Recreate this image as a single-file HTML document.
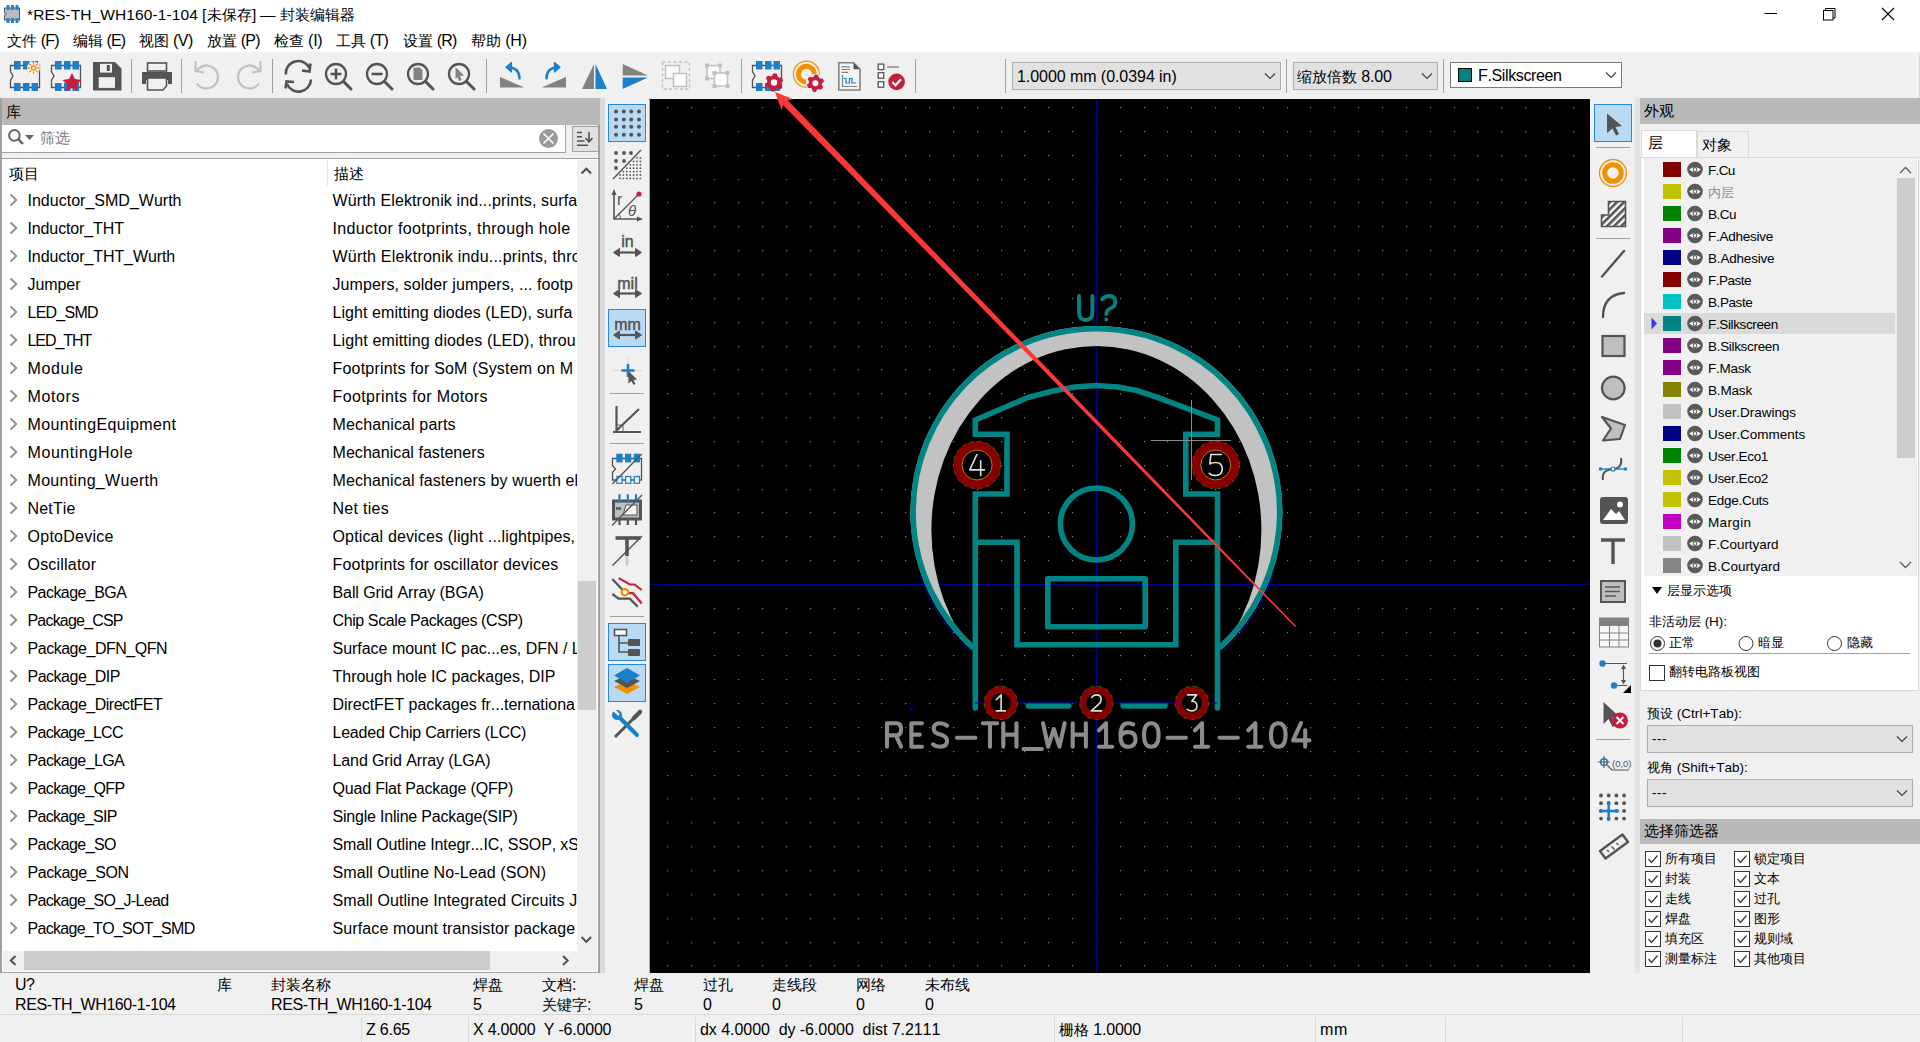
<!DOCTYPE html>
<html><head><meta charset="utf-8">
<style>
*{margin:0;padding:0;box-sizing:border-box}
html,body{width:1920px;height:1042px;overflow:hidden;background:#f0f0f0;font-family:"Liberation Sans",sans-serif;font-size:15px;color:#000;position:relative}
.a{position:absolute}
.t{position:absolute;white-space:nowrap;line-height:1;font-kerning:none}
svg{overflow:visible}
</style></head><body>

<div class="a" style="left:0px;top:0px;width:1920px;height:52px;background:#fff"></div>
<svg class="a" style="left:3px;top:5px" width="18" height="18" viewBox="0 0 18 18"><rect x="1.5" y="3" width="15" height="12" fill="#b4bcc6" stroke="#555" stroke-width="1"/><path d="M1.5 7 l2 2 l-2 2" fill="#fff" stroke="#555" stroke-width="1"/><rect x="3.5" y="0" width="3" height="5" fill="#1d84cf"/><rect x="3.5" y="13" width="3" height="5" fill="#1d84cf"/><rect x="8" y="0" width="3" height="5" fill="#1d84cf"/><rect x="8" y="13" width="3" height="5" fill="#1d84cf"/><rect x="12.5" y="0" width="3" height="5" fill="#1d84cf"/><rect x="12.5" y="13" width="3" height="5" fill="#1d84cf"/></svg>
<div class="t" style="left:27px;top:7px;font-size:15.5px;color:#000;"><span style="font-size:15.5px;letter-spacing:0.114px">*RES-TH_WH160-1-104</span></div>
<div class="t" style="left:202px;top:7px;font-size:15.5px;color:#000;"><span style="font-size:15.5px;letter-spacing:0.694px">[</span></div>
<div class="t" style="left:207px;top:7px;font-size:16px;color:#000;"><span style="font-size:15px">未保存</span></div>
<div class="t" style="left:252px;top:7px;font-size:15.5px;color:#000;"><span style="font-size:15.5px;letter-spacing:0.694px">]</span></div>
<div class="t" style="left:260px;top:7px;font-size:15.5px;color:#000;"><span style="font-size:15.5px;letter-spacing:0.500px">—</span></div>
<div class="t" style="left:279.5px;top:7px;font-size:16px;color:#000;"><span style="font-size:15px">封装编辑器</span></div>
<svg class="a" style="left:1764px;top:8px" width="14" height="12" viewBox="0 0 14 12"><line x1="0.5" y1="5.5" x2="13" y2="5.5" stroke="#000" stroke-width="1"/></svg>
<svg class="a" style="left:1822px;top:7px" width="14" height="14" viewBox="0 0 14 14"><rect x="1.5" y="3.5" width="9.5" height="9.5" fill="none" stroke="#000" stroke-width="1"/><path d="M3.5 3.5 V1.5 H13 V11 H11" fill="none" stroke="#000" stroke-width="1"/></svg>
<svg class="a" style="left:1881px;top:7px" width="14" height="14" viewBox="0 0 14 14"><path d="M1 1 L13 13 M13 1 L1 13" stroke="#000" stroke-width="1.1"/></svg>
<div class="t" style="left:7px;top:33px;font-size:16px;color:#000;"><span style="font-size:15px">文件</span><span style="font-size:16px;letter-spacing:-0.793px">&nbsp;(F)</span></div>
<div class="t" style="left:73px;top:33px;font-size:16px;color:#000;"><span style="font-size:15px">编辑</span><span style="font-size:16px;letter-spacing:-0.930px">&nbsp;(E)</span></div>
<div class="t" style="left:139px;top:33px;font-size:16px;color:#000;"><span style="font-size:15px">视图</span><span style="font-size:16px;letter-spacing:-0.473px">&nbsp;(V)</span></div>
<div class="t" style="left:207px;top:33px;font-size:16px;color:#000;"><span style="font-size:15px">放置</span><span style="font-size:16px;letter-spacing:-0.703px">&nbsp;(P)</span></div>
<div class="t" style="left:274px;top:33px;font-size:16px;color:#000;"><span style="font-size:15px">检查</span><span style="font-size:16px;letter-spacing:-0.323px">&nbsp;(I)</span></div>
<div class="t" style="left:336px;top:33px;font-size:16px;color:#000;"><span style="font-size:15px">工具</span><span style="font-size:16px;letter-spacing:-0.662px">&nbsp;(T)</span></div>
<div class="t" style="left:403px;top:33px;font-size:16px;color:#000;"><span style="font-size:15px">设置</span><span style="font-size:16px;letter-spacing:-0.781px">&nbsp;(R)</span></div>
<div class="t" style="left:471px;top:33px;font-size:16px;color:#000;"><span style="font-size:15px">帮助</span><span style="font-size:16px;letter-spacing:-0.205px">&nbsp;(H)</span></div>
<div class="a" style="left:0px;top:52px;width:1920px;height:46px;background:#f0f0f0"></div>
<div class="a" style="left:1919px;top:54px;width:1px;height:44px;background:#d9d9d9"></div>
<div class="a" style="left:131px;top:59px;width:1px;height:34px;background:#a0a0a0"></div>
<div class="a" style="left:181px;top:59px;width:1px;height:34px;background:#a0a0a0"></div>
<div class="a" style="left:272px;top:59px;width:1px;height:34px;background:#a0a0a0"></div>
<div class="a" style="left:486px;top:59px;width:1px;height:34px;background:#a0a0a0"></div>
<div class="a" style="left:741px;top:59px;width:1px;height:34px;background:#a0a0a0"></div>
<div class="a" style="left:915px;top:59px;width:1px;height:34px;background:#a0a0a0"></div>
<div class="a" style="left:1005px;top:59px;width:1px;height:34px;background:#a0a0a0"></div>
<div class="a" style="left:1286px;top:59px;width:1px;height:34px;background:#a0a0a0"></div>
<div class="a" style="left:1443px;top:59px;width:1px;height:34px;background:#a0a0a0"></div>
<svg class="a" style="left:0;top:0" width="1920" height="100"><path d="M10.5,65.5 H39.5 V87.5 H10.5 V80.1 L13,75.9 L10.5,71.6 Z" fill="none" stroke="#545454" stroke-width="1.3"/><rect x="14" y="61" width="6.5" height="8.5" fill="#1b7fc9"/><rect x="14" y="83" width="6.5" height="8" fill="#1b7fc9"/><rect x="23" y="61" width="6.5" height="8.5" fill="#1b7fc9"/><rect x="23" y="83" width="6.5" height="8" fill="#1b7fc9"/><rect x="31.5" y="61" width="6.5" height="8.5" fill="#1b7fc9"/><rect x="31.5" y="83" width="6.5" height="8" fill="#1b7fc9"/><circle cx="33.5" cy="68" r="6.5" fill="#fff" opacity="0.9"/><path d="M36.70,68.00 L39.50,68.00M35.76,70.26 L37.74,72.24M33.50,71.20 L33.50,74.00M31.24,70.26 L29.26,72.24M30.30,68.00 L27.50,68.00M31.24,65.74 L29.26,63.76M33.50,64.80 L33.50,62.00M35.76,65.74 L37.74,63.76" stroke="#f29100" stroke-width="1.3"/><circle cx="33.5" cy="68" r="2" fill="none" stroke="#f29100" stroke-width="1.3"/><path d="M51.5,65.5 H80.5 V87.5 H51.5 V80.1 L54,75.9 L51.5,71.6 Z" fill="none" stroke="#545454" stroke-width="1.3"/><rect x="55" y="61" width="6.5" height="8.5" fill="#1b7fc9"/><rect x="55" y="83" width="6.5" height="8" fill="#1b7fc9"/><rect x="64" y="61" width="6.5" height="8.5" fill="#1b7fc9"/><rect x="64" y="83" width="6.5" height="8" fill="#1b7fc9"/><rect x="72.5" y="61" width="6.5" height="8.5" fill="#1b7fc9"/><rect x="72.5" y="83" width="6.5" height="8" fill="#1b7fc9"/><path d="M72.00,73.00 L74.94,78.95 L81.51,79.91 L76.76,84.55 L77.88,91.09 L72.00,88.00 L66.12,91.09 L67.24,84.55 L62.49,79.91 L69.06,78.95Z" fill="#c51f3b"/><path d="M93,62 H115 L121.5,68.5 V90.5 H93 Z" fill="#545454"/><rect x="100" y="63.8" width="12" height="8.8" fill="#f0f0f0"/><rect x="106.8" y="65" width="3" height="6" fill="#545454"/><rect x="98.7" y="77.2" width="16.3" height="10.7" fill="#f0f0f0"/><rect x="147.5" y="63" width="19" height="8" fill="none" stroke="#545454" stroke-width="1.6"/><path d="M142,72 H172 V84 H168 V80 H146 V84 H142 Z" fill="#545454"/><path d="M147.5,78 H166.5 V86 L163,90 H147.5 Z" fill="#f0f0f0" stroke="#545454" stroke-width="1.6"/><path d="M195.5,61 V71 L204,72.5" fill="none" stroke="#c0c0c0" stroke-width="2.2"/><path d="M197,70.5 A11.5,11.5 0 1 1 197,83.5" fill="none" stroke="#c0c0c0" stroke-width="2.2"/><path d="M260.5,61 V71 L252,72.5" fill="none" stroke="#c0c0c0" stroke-width="2.2"/><path d="M259,70.5 A11.5,11.5 0 1 0 259,83.5" fill="none" stroke="#c0c0c0" stroke-width="2.2"/><path d="M285.8,74.5 A12.5,12.5 0 0 1 309.5,68" fill="none" stroke="#545454" stroke-width="2.6"/><path d="M310.5,63.5 L309.5,71.5 L302,70.5" fill="none" stroke="#545454" stroke-width="2.6" stroke-linejoin="miter"/><path d="M311,79.5 A12.5,12.5 0 0 1 287,84" fill="none" stroke="#545454" stroke-width="2.6"/><path d="M285.5,88.5 L286.5,81.5 L294,82" fill="none" stroke="#545454" stroke-width="2.6" stroke-linejoin="miter"/><circle cx="336" cy="74" r="10" fill="none" stroke="#545454" stroke-width="2.3"/><path d="M343.5,81.5 L351,89" stroke="#545454" stroke-width="3" stroke-linecap="round"/><path d="M330.5,74 H341.5 M336,68.5 V79.5" stroke="#545454" stroke-width="2.6"/><circle cx="377" cy="74" r="10" fill="none" stroke="#545454" stroke-width="2.3"/><path d="M384.5,81.5 L392,89" stroke="#545454" stroke-width="3" stroke-linecap="round"/><path d="M371.5,74 H382.5" stroke="#545454" stroke-width="2.6"/><circle cx="418" cy="74" r="10" fill="none" stroke="#545454" stroke-width="2.3"/><path d="M425.5,81.5 L433,89" stroke="#545454" stroke-width="3" stroke-linecap="round"/><path d="M413.5,67.5 H420 L422.5,70 V80 H413.5 Z" fill="#828282"/><circle cx="459" cy="74" r="10" fill="none" stroke="#545454" stroke-width="2.3"/><path d="M466.5,81.5 L474,89" stroke="#545454" stroke-width="3" stroke-linecap="round"/><path d="M455.5,67 L464,75.5 L460,76 L461.5,80 L459,81 L457.5,77 L455.5,79 Z" fill="#828282"/><path d="M500,77 L524.5,87.6 H500 Z" fill="#828282"/><path d="M519.5,78.5 Q519.5,68 509,67.5" fill="none" stroke="#1b7fc9" stroke-width="2.4" stroke-linecap="round"/><path d="M506,67.2 L511.5,62.5 L511.5,72 Z" fill="#1b7fc9" stroke="#1b7fc9" stroke-width="1.2" stroke-linejoin="round"/><path d="M566,77 L541.5,87.6 H566 Z" fill="#828282"/><path d="M546.5,78.5 Q546.5,68 557,67.5" fill="none" stroke="#1b7fc9" stroke-width="2.4" stroke-linecap="round"/><path d="M560,67.2 L554.5,62.5 L554.5,72 Z" fill="#1b7fc9" stroke="#1b7fc9" stroke-width="1.2" stroke-linejoin="round"/><path d="M582,89 L594,64 V89 Z" fill="#828282"/><path d="M595.5,64 L607,89 H595.5 Z" fill="#1b7fc9"/><path d="M622.7,64 L648,75.6 H622.7 Z" fill="#828282"/><path d="M622.7,77.6 H648 L622.7,89 Z" fill="#1b7fc9"/><rect x="662.5" y="62" width="27" height="27" fill="none" stroke="#c0c0c0" stroke-width="1.5" stroke-dasharray="3 2.5"/><rect x="665.5" y="65.5" width="14" height="13" fill="#fafafa" stroke="#c0c0c0" stroke-width="1.5"/><rect x="673.5" y="73.5" width="13" height="13" fill="#fff" stroke="#c0c0c0" stroke-width="1.5"/><rect x="707" y="65.5" width="13" height="13" fill="#fafafa" stroke="#c0c0c0" stroke-width="1.5"/><rect x="714.5" y="73" width="13" height="13" fill="#fff" stroke="#c0c0c0" stroke-width="1.5"/><rect x="705" y="63.5" width="4" height="4" fill="#c0c0c0"/><rect x="718" y="63.5" width="4" height="4" fill="#c0c0c0"/><rect x="705" y="76.5" width="4" height="4" fill="#c0c0c0"/><rect x="712.5" y="71" width="4" height="4" fill="#c0c0c0"/><rect x="725.5" y="71" width="4" height="4" fill="#c0c0c0"/><rect x="712.5" y="84" width="4" height="4" fill="#c0c0c0"/><rect x="725.5" y="84" width="4" height="4" fill="#c0c0c0"/><path d="M752.5,65.5 H781.5 V87.5 H752.5 V80.1 L755,75.9 L752.5,71.6 Z" fill="none" stroke="#545454" stroke-width="1.3"/><rect x="756" y="61" width="6.5" height="8.5" fill="#1b7fc9"/><rect x="756" y="83" width="6.5" height="8" fill="#1b7fc9"/><rect x="765" y="61" width="6.5" height="8.5" fill="#1b7fc9"/><rect x="765" y="83" width="6.5" height="8" fill="#1b7fc9"/><rect x="773.5" y="61" width="6.5" height="8.5" fill="#1b7fc9"/><rect x="773.5" y="83" width="6.5" height="8" fill="#1b7fc9"/><path d="M774.00,74.00 L776.20,74.29 L777.06,77.20 L778.33,78.17 L781.36,78.25 L782.21,80.30 L780.12,82.50 L779.91,84.08 L781.36,86.75 L780.01,88.51 L777.06,87.80 L775.58,88.41 L774.00,91.00 L771.80,90.71 L770.94,87.80 L769.67,86.83 L766.64,86.75 L765.79,84.70 L767.88,82.50 L768.09,80.92 L766.64,78.25 L767.99,76.49 L770.94,77.20 L772.42,76.59Z" fill="#c51f3b" stroke="#c51f3b" stroke-width="1.5" stroke-linejoin="round"/><circle cx="774" cy="82.5" r="3.2" fill="#fff"/><circle cx="806.4" cy="74.2" r="13" fill="none" stroke="#f29100" stroke-width="1.2"/><circle cx="806.4" cy="74.2" r="8" fill="none" stroke="#f29100" stroke-width="5"/><circle cx="815.4" cy="83.2" r="9.5" fill="#f0f0f0"/><path d="M815.40,75.20 L817.47,75.47 L818.28,78.21 L819.47,79.13 L822.33,79.20 L823.13,81.13 L821.16,83.20 L820.96,84.69 L822.33,87.20 L821.06,88.86 L818.28,88.19 L816.89,88.76 L815.40,91.20 L813.33,90.93 L812.52,88.19 L811.33,87.27 L808.47,87.20 L807.67,85.27 L809.64,83.20 L809.84,81.71 L808.47,79.20 L809.74,77.54 L812.52,78.21 L813.91,77.64Z" fill="#c51f3b" stroke="#c51f3b" stroke-width="1.5" stroke-linejoin="round"/><circle cx="815.4" cy="83.2" r="3" fill="#fff"/><path d="M838.8,62.8 H853.5 L860,69.3 V90 H838.8 Z" fill="#f4f4f4" stroke="#828282" stroke-width="1.6"/><path d="M853.5,62.8 L860,69.3 H853.5 Z" fill="#545454"/><path d="M841.5,66.8 H850 M841.5,69.5 H850 M841.5,72.3 H848" stroke="#828282" stroke-width="1.2"/><path d="M842.5,75 V86.5 H857" fill="none" stroke="#828282" stroke-width="1.2"/><path d="M843.5,78.5 H846 V83 H849.5 V78.5 H852 V83 H856" fill="none" stroke="#1b7fc9" stroke-width="1.2"/><rect x="878.2" y="64.10000000000001" width="5.5" height="5.5" fill="#fff" stroke="#545454" stroke-width="1.3"/><rect x="878.2" y="72.7" width="5.5" height="5.5" fill="#fff" stroke="#545454" stroke-width="1.3"/><rect x="878.2" y="81.7" width="5.5" height="5.5" fill="#fff" stroke="#545454" stroke-width="1.3"/><path d="M887,67 H899" stroke="#828282" stroke-width="1.4"/><circle cx="896.6" cy="81.9" r="8.3" fill="#c51f3b"/><path d="M892.3,82 L895.5,85.3 L901,79.2" fill="none" stroke="#fff" stroke-width="2.2"/></svg>
<div class="a" style="left:1012px;top:62px;width:269px;height:28px;background:#e1e1e1;border:1px solid #adadad"></div>
<div class="t" style="left:1017px;top:69px;font-size:16px;color:#000;"><span style="font-size:16px;letter-spacing:-0.061px">1.0000 mm (0.0394 in)</span></div>
<div class="a" style="left:1293px;top:62px;width:145px;height:28px;background:#e1e1e1;border:1px solid #adadad"></div>
<div class="t" style="left:1297px;top:69px;font-size:16px;color:#000;"><span style="font-size:15px">缩放倍数</span><span style="font-size:16px;letter-spacing:-0.184px">&nbsp;8.00</span></div>
<div class="a" style="left:1450px;top:62px;width:172px;height:26px;background:#fff;border:1px solid #7a7a7a"></div>
<div class="a" style="left:1458px;top:68px;width:14px;height:14px;background:#008484;border:1px solid #000"></div>
<div class="t" style="left:1478px;top:68px;font-size:16px;color:#000;"><span style="font-size:16px;letter-spacing:-0.375px">F.Silkscreen</span></div>
<svg class="a" style="left:0;top:0" width="1920" height="100"><path d="M1265,73.5 L1270,78.5 L1275,73.5" fill="none" stroke="#404040" stroke-width="1.2"/><path d="M1422,73.5 L1427,78.5 L1432,73.5" fill="none" stroke="#404040" stroke-width="1.2"/><path d="M1606,72.5 L1611,77.5 L1616,72.5" fill="none" stroke="#404040" stroke-width="1.2"/></svg>
<div class="a" style="left:0px;top:98px;width:600px;height:876px;background:#f0f0f0"></div>
<div class="a" style="left:600px;top:98px;width:5px;height:875px;background:#dadada"></div>
<div class="a" style="left:0px;top:98px;width:600px;height:27px;background:#b9b9b9"></div>
<div class="t" style="left:6px;top:104px;font-size:16px;color:#000;"><span style="font-size:15px">库</span></div>
<div class="a" style="left:2px;top:125px;width:564px;height:28px;background:#fff;border-right:1px solid #a0a0a8;border-bottom:1px solid #a0a0a8"></div>
<div class="t" style="left:40px;top:130px;font-size:16px;color:#7a7a7a;"><span style="font-size:15px">筛选</span></div>
<div class="a" style="left:572px;top:126px;width:27px;height:26px;background:#e1e1e1;border:1px solid #a0a0a0"></div>
<div class="a" style="left:2px;top:158px;width:597px;height:814px;background:#fff;border-top:1px solid #a0a0a8"></div>
<div class="a" style="left:0px;top:98px;width:2px;height:876px;background:#a0a0a0"></div>
<div class="a" style="left:598px;top:125px;width:2px;height:849px;background:#a0a0a0"></div>
<div class="a" style="left:0px;top:972px;width:600px;height:2px;background:#a0a0a0"></div>
<div class="t" style="left:9px;top:166px;font-size:16px;color:#000;"><span style="font-size:15px">项目</span></div>
<div class="t" style="left:334px;top:166px;font-size:16px;color:#000;"><span style="font-size:15px">描述</span></div>
<div class="a" style="left:327px;top:160px;width:1px;height:26px;background:#e5e5e5"></div>
<svg class="a" style="left:0;top:0" width="700" height="1000"><circle cx="14.4" cy="135.4" r="5.3" fill="none" stroke="#646464" stroke-width="2"/><path d="M18.2,139.2 L23,144" stroke="#646464" stroke-width="2.4"/><path d="M25,135 H34 L29.5,140 Z" fill="#646464"/><circle cx="548.5" cy="138.5" r="9.5" fill="#9a9a9a"/><path d="M543.5,133.5 L553.5,143.5 M553.5,133.5 L543.5,143.5" stroke="#fff" stroke-width="1.6"/><path d="M577,132.5 H582 M577,136.8 H582 M577,141 H584.5 M577,145.2 H588" stroke="#505050" stroke-width="1.6"/><path d="M589,132 V141" stroke="#505050" stroke-width="1.6"/><path d="M585.5,138 L589,141.8 L592.5,138" fill="none" stroke="#505050" stroke-width="1.6"/></svg>
<div class="a" style="left:2px;top:186px;width:575px;height:765px;overflow:hidden">
<div class="t" style="left:25.5px;top:7px;font-size:16px"><span style="font-size:16px;letter-spacing:0.011px">Inductor_SMD_Wurth</span></div>
<div class="t" style="left:330.5px;top:7px;font-size:16px"><span style="font-size:16px;letter-spacing:0.130px">Würth Elektronik ind...prints, surfa</span></div>
<div class="t" style="left:25.5px;top:35px;font-size:16px"><span style="font-size:16px;letter-spacing:-0.124px">Inductor_THT</span></div>
<div class="t" style="left:330.5px;top:35px;font-size:16px"><span style="font-size:16px;letter-spacing:0.364px">Inductor footprints, through hole</span></div>
<div class="t" style="left:25.5px;top:63px;font-size:16px"><span style="font-size:16px;letter-spacing:-0.100px">Inductor_THT_Wurth</span></div>
<div class="t" style="left:330.5px;top:63px;font-size:16px"><span style="font-size:16px;letter-spacing:0.203px">Würth Elektronik indu...prints, thro</span></div>
<div class="t" style="left:25.5px;top:91px;font-size:16px"><span style="font-size:16px;letter-spacing:-0.075px">Jumper</span></div>
<div class="t" style="left:330.5px;top:91px;font-size:16px"><span style="font-size:16px;letter-spacing:0.093px">Jumpers, solder jumpers, ... footp</span></div>
<div class="t" style="left:25.5px;top:119px;font-size:16px"><span style="font-size:16px;letter-spacing:-0.755px">LED_SMD</span></div>
<div class="t" style="left:330.5px;top:119px;font-size:16px"><span style="font-size:16px;letter-spacing:0.071px">Light emitting diodes (LED), surfa</span></div>
<div class="t" style="left:25.5px;top:147px;font-size:16px"><span style="font-size:16px;letter-spacing:-1.041px">LED_THT</span></div>
<div class="t" style="left:330.5px;top:147px;font-size:16px"><span style="font-size:16px;letter-spacing:0.148px">Light emitting diodes (LED), throu</span></div>
<div class="t" style="left:25.5px;top:175px;font-size:16px"><span style="font-size:16px;letter-spacing:0.590px">Module</span></div>
<div class="t" style="left:330.5px;top:175px;font-size:16px"><span style="font-size:16px;letter-spacing:0.195px">Footprints for SoM (System on M</span></div>
<div class="t" style="left:25.5px;top:203px;font-size:16px"><span style="font-size:16px;letter-spacing:0.612px">Motors</span></div>
<div class="t" style="left:330.5px;top:203px;font-size:16px"><span style="font-size:16px;letter-spacing:0.373px">Footprints for Motors</span></div>
<div class="t" style="left:25.5px;top:231px;font-size:16px"><span style="font-size:16px;letter-spacing:0.390px">MountingEquipment</span></div>
<div class="t" style="left:330.5px;top:231px;font-size:16px"><span style="font-size:16px;letter-spacing:0.134px">Mechanical parts</span></div>
<div class="t" style="left:25.5px;top:259px;font-size:16px"><span style="font-size:16px;letter-spacing:0.578px">MountingHole</span></div>
<div class="t" style="left:330.5px;top:259px;font-size:16px"><span style="font-size:16px;letter-spacing:0.050px">Mechanical fasteners</span></div>
<div class="t" style="left:25.5px;top:287px;font-size:16px"><span style="font-size:16px;letter-spacing:0.317px">Mounting_Wuerth</span></div>
<div class="t" style="left:330.5px;top:287px;font-size:16px"><span style="font-size:16px;letter-spacing:0.114px">Mechanical fasteners by wuerth el</span></div>
<div class="t" style="left:25.5px;top:315px;font-size:16px"><span style="font-size:16px;letter-spacing:0.159px">NetTie</span></div>
<div class="t" style="left:330.5px;top:315px;font-size:16px"><span style="font-size:16px;letter-spacing:0.284px">Net ties</span></div>
<div class="t" style="left:25.5px;top:343px;font-size:16px"><span style="font-size:16px;letter-spacing:0.268px">OptoDevice</span></div>
<div class="t" style="left:330.5px;top:343px;font-size:16px"><span style="font-size:16px;letter-spacing:0.142px">Optical devices (light ...lightpipes,</span></div>
<div class="t" style="left:25.5px;top:371px;font-size:16px"><span style="font-size:16px;letter-spacing:0.199px">Oscillator</span></div>
<div class="t" style="left:330.5px;top:371px;font-size:16px"><span style="font-size:16px;letter-spacing:0.162px">Footprints for oscillator devices</span></div>
<div class="t" style="left:25.5px;top:399px;font-size:16px"><span style="font-size:16px;letter-spacing:-0.565px">Package_BGA</span></div>
<div class="t" style="left:330.5px;top:399px;font-size:16px"><span style="font-size:16px;letter-spacing:-0.085px">Ball Grid Array (BGA)</span></div>
<div class="t" style="left:25.5px;top:427px;font-size:16px"><span style="font-size:16px;letter-spacing:-0.804px">Package_CSP</span></div>
<div class="t" style="left:330.5px;top:427px;font-size:16px"><span style="font-size:16px;letter-spacing:-0.398px">Chip Scale Packages (CSP)</span></div>
<div class="t" style="left:25.5px;top:455px;font-size:16px"><span style="font-size:16px;letter-spacing:-0.472px">Package_DFN_QFN</span></div>
<div class="t" style="left:330.5px;top:455px;font-size:16px"><span style="font-size:16px;letter-spacing:-0.025px">Surface mount IC pac...es, DFN / L</span></div>
<div class="t" style="left:25.5px;top:483px;font-size:16px"><span style="font-size:16px;letter-spacing:-0.491px">Package_DIP</span></div>
<div class="t" style="left:330.5px;top:483px;font-size:16px"><span style="font-size:16px;letter-spacing:-0.011px">Through hole IC packages, DIP</span></div>
<div class="t" style="left:25.5px;top:511px;font-size:16px"><span style="font-size:16px;letter-spacing:-0.490px">Package_DirectFET</span></div>
<div class="t" style="left:330.5px;top:511px;font-size:16px"><span style="font-size:16px;letter-spacing:-0.038px">DirectFET packages fr...ternationa</span></div>
<div class="t" style="left:25.5px;top:539px;font-size:16px"><span style="font-size:16px;letter-spacing:-0.720px">Package_LCC</span></div>
<div class="t" style="left:330.5px;top:539px;font-size:16px"><span style="font-size:16px;letter-spacing:-0.211px">Leaded Chip Carriers (LCC)</span></div>
<div class="t" style="left:25.5px;top:567px;font-size:16px"><span style="font-size:16px;letter-spacing:-0.591px">Package_LGA</span></div>
<div class="t" style="left:330.5px;top:567px;font-size:16px"><span style="font-size:16px;letter-spacing:-0.103px">Land Grid Array (LGA)</span></div>
<div class="t" style="left:25.5px;top:595px;font-size:16px"><span style="font-size:16px;letter-spacing:-0.643px">Package_QFP</span></div>
<div class="t" style="left:330.5px;top:595px;font-size:16px"><span style="font-size:16px;letter-spacing:-0.190px">Quad Flat Package (QFP)</span></div>
<div class="t" style="left:25.5px;top:623px;font-size:16px"><span style="font-size:16px;letter-spacing:-0.708px">Package_SIP</span></div>
<div class="t" style="left:330.5px;top:623px;font-size:16px"><span style="font-size:16px;letter-spacing:-0.201px">Single Inline Package(SIP)</span></div>
<div class="t" style="left:25.5px;top:651px;font-size:16px"><span style="font-size:16px;letter-spacing:-0.589px">Package_SO</span></div>
<div class="t" style="left:330.5px;top:651px;font-size:16px"><span style="font-size:16px;letter-spacing:-0.129px">Small Outline Integr...IC, SSOP, xSO</span></div>
<div class="t" style="left:25.5px;top:679px;font-size:16px"><span style="font-size:16px;letter-spacing:-0.420px">Package_SON</span></div>
<div class="t" style="left:330.5px;top:679px;font-size:16px"><span style="font-size:16px;letter-spacing:0.105px">Small Outline No-Lead (SON)</span></div>
<div class="t" style="left:25.5px;top:707px;font-size:16px"><span style="font-size:16px;letter-spacing:-0.660px">Package_SO_J-Lead</span></div>
<div class="t" style="left:330.5px;top:707px;font-size:16px"><span style="font-size:16px;letter-spacing:0.082px">Small Outline Integrated Circuits J</span></div>
<div class="t" style="left:25.5px;top:735px;font-size:16px"><span style="font-size:16px;letter-spacing:-0.699px">Package_TO_SOT_SMD</span></div>
<div class="t" style="left:330.5px;top:735px;font-size:16px"><span style="font-size:16px;letter-spacing:0.108px">Surface mount transistor package</span></div>
</div>
<svg class="a" style="left:0;top:0" width="700" height="1000"><path d="M10.5,194.5 L16.3,200 L10.5,205.5" fill="none" stroke="#8e8e8e" stroke-width="1.9"/><path d="M10.5,222.5 L16.3,228 L10.5,233.5" fill="none" stroke="#8e8e8e" stroke-width="1.9"/><path d="M10.5,250.5 L16.3,256 L10.5,261.5" fill="none" stroke="#8e8e8e" stroke-width="1.9"/><path d="M10.5,278.5 L16.3,284 L10.5,289.5" fill="none" stroke="#8e8e8e" stroke-width="1.9"/><path d="M10.5,306.5 L16.3,312 L10.5,317.5" fill="none" stroke="#8e8e8e" stroke-width="1.9"/><path d="M10.5,334.5 L16.3,340 L10.5,345.5" fill="none" stroke="#8e8e8e" stroke-width="1.9"/><path d="M10.5,362.5 L16.3,368 L10.5,373.5" fill="none" stroke="#8e8e8e" stroke-width="1.9"/><path d="M10.5,390.5 L16.3,396 L10.5,401.5" fill="none" stroke="#8e8e8e" stroke-width="1.9"/><path d="M10.5,418.5 L16.3,424 L10.5,429.5" fill="none" stroke="#8e8e8e" stroke-width="1.9"/><path d="M10.5,446.5 L16.3,452 L10.5,457.5" fill="none" stroke="#8e8e8e" stroke-width="1.9"/><path d="M10.5,474.5 L16.3,480 L10.5,485.5" fill="none" stroke="#8e8e8e" stroke-width="1.9"/><path d="M10.5,502.5 L16.3,508 L10.5,513.5" fill="none" stroke="#8e8e8e" stroke-width="1.9"/><path d="M10.5,530.5 L16.3,536 L10.5,541.5" fill="none" stroke="#8e8e8e" stroke-width="1.9"/><path d="M10.5,558.5 L16.3,564 L10.5,569.5" fill="none" stroke="#8e8e8e" stroke-width="1.9"/><path d="M10.5,586.5 L16.3,592 L10.5,597.5" fill="none" stroke="#8e8e8e" stroke-width="1.9"/><path d="M10.5,614.5 L16.3,620 L10.5,625.5" fill="none" stroke="#8e8e8e" stroke-width="1.9"/><path d="M10.5,642.5 L16.3,648 L10.5,653.5" fill="none" stroke="#8e8e8e" stroke-width="1.9"/><path d="M10.5,670.5 L16.3,676 L10.5,681.5" fill="none" stroke="#8e8e8e" stroke-width="1.9"/><path d="M10.5,698.5 L16.3,704 L10.5,709.5" fill="none" stroke="#8e8e8e" stroke-width="1.9"/><path d="M10.5,726.5 L16.3,732 L10.5,737.5" fill="none" stroke="#8e8e8e" stroke-width="1.9"/><path d="M10.5,754.5 L16.3,760 L10.5,765.5" fill="none" stroke="#8e8e8e" stroke-width="1.9"/><path d="M10.5,782.5 L16.3,788 L10.5,793.5" fill="none" stroke="#8e8e8e" stroke-width="1.9"/><path d="M10.5,810.5 L16.3,816 L10.5,821.5" fill="none" stroke="#8e8e8e" stroke-width="1.9"/><path d="M10.5,838.5 L16.3,844 L10.5,849.5" fill="none" stroke="#8e8e8e" stroke-width="1.9"/><path d="M10.5,866.5 L16.3,872 L10.5,877.5" fill="none" stroke="#8e8e8e" stroke-width="1.9"/><path d="M10.5,894.5 L16.3,900 L10.5,905.5" fill="none" stroke="#8e8e8e" stroke-width="1.9"/><path d="M10.5,922.5 L16.3,928 L10.5,933.5" fill="none" stroke="#8e8e8e" stroke-width="1.9"/></svg>
<div class="a" style="left:577px;top:160px;width:20px;height:811px;background:#f0f0f0"></div>
<div class="a" style="left:578px;top:581px;width:18px;height:129px;background:#cdcdcd"></div>
<div class="a" style="left:3px;top:951px;width:574px;height:20px;background:#f0f0f0"></div>
<div class="a" style="left:24px;top:951px;width:466px;height:19px;background:#cdcdcd"></div>
<svg class="a" style="left:0;top:0" width="700" height="1000"><path d="M581.5,173.5 L586.3,168.7 L591.1,173.5" fill="none" stroke="#505050" stroke-width="2"/><path d="M581.5,937 L586.3,941.8 L591.1,937" fill="none" stroke="#505050" stroke-width="2"/><path d="M15.5,956 L10.8,960.5 L15.5,965" fill="none" stroke="#505050" stroke-width="2"/><path d="M563,956 L567.7,960.5 L563,965" fill="none" stroke="#505050" stroke-width="2"/></svg>
<div class="a" style="left:605px;top:98px;width:45px;height:874px;background:#f0f0f0"></div>
<svg class="a" style="left:0;top:0" width="700" height="1000"><rect x="608.5" y="104.5" width="37" height="37" fill="#b8daf5" stroke="#2a86d8" stroke-width="1"/><rect x="608.5" y="309.5" width="37" height="37" fill="#b8daf5" stroke="#2a86d8" stroke-width="1"/><rect x="608.5" y="623.5" width="37" height="37" fill="#b8daf5" stroke="#2a86d8" stroke-width="1"/><rect x="608.5" y="664.5" width="37" height="37" fill="#b8daf5" stroke="#2a86d8" stroke-width="1"/><circle cx="616" cy="111.6" r="2" fill="#545454"/><circle cx="616" cy="119.6" r="2" fill="#545454"/><circle cx="616" cy="126.8" r="2" fill="#545454"/><circle cx="616" cy="134.8" r="2" fill="#545454"/><circle cx="623.8" cy="111.6" r="2" fill="#545454"/><circle cx="623.8" cy="119.6" r="2" fill="#545454"/><circle cx="623.8" cy="126.8" r="2" fill="#545454"/><circle cx="623.8" cy="134.8" r="2" fill="#545454"/><circle cx="631.2" cy="111.6" r="2" fill="#545454"/><circle cx="631.2" cy="119.6" r="2" fill="#545454"/><circle cx="631.2" cy="126.8" r="2" fill="#545454"/><circle cx="631.2" cy="134.8" r="2" fill="#545454"/><circle cx="639" cy="111.6" r="2" fill="#545454"/><circle cx="639" cy="119.6" r="2" fill="#545454"/><circle cx="639" cy="126.8" r="2" fill="#545454"/><circle cx="639" cy="134.8" r="2" fill="#545454"/><circle cx="616" cy="153" r="1.9" fill="#545454"/><circle cx="624" cy="153" r="1.9" fill="#545454"/><circle cx="631" cy="153" r="1.9" fill="#545454"/><circle cx="616" cy="161" r="1.9" fill="#545454"/><circle cx="624" cy="161" r="1.9" fill="#545454"/><circle cx="616" cy="168" r="1.9" fill="#545454"/><circle cx="620.0" cy="175.0" r="0.9" fill="#545454"/><circle cx="620.0" cy="178.4" r="0.9" fill="#545454"/><circle cx="623.4" cy="171.6" r="0.9" fill="#545454"/><circle cx="623.4" cy="175.0" r="0.9" fill="#545454"/><circle cx="623.4" cy="178.4" r="0.9" fill="#545454"/><circle cx="626.8" cy="168.2" r="0.9" fill="#545454"/><circle cx="626.8" cy="171.6" r="0.9" fill="#545454"/><circle cx="626.8" cy="175.0" r="0.9" fill="#545454"/><circle cx="626.8" cy="178.4" r="0.9" fill="#545454"/><circle cx="630.2" cy="164.8" r="0.9" fill="#545454"/><circle cx="630.2" cy="168.2" r="0.9" fill="#545454"/><circle cx="630.2" cy="171.6" r="0.9" fill="#545454"/><circle cx="630.2" cy="175.0" r="0.9" fill="#545454"/><circle cx="630.2" cy="178.4" r="0.9" fill="#545454"/><circle cx="633.6" cy="161.4" r="0.9" fill="#545454"/><circle cx="633.6" cy="164.8" r="0.9" fill="#545454"/><circle cx="633.6" cy="168.2" r="0.9" fill="#545454"/><circle cx="633.6" cy="171.6" r="0.9" fill="#545454"/><circle cx="633.6" cy="175.0" r="0.9" fill="#545454"/><circle cx="633.6" cy="178.4" r="0.9" fill="#545454"/><circle cx="637.0" cy="158.0" r="0.9" fill="#545454"/><circle cx="637.0" cy="161.4" r="0.9" fill="#545454"/><circle cx="637.0" cy="164.8" r="0.9" fill="#545454"/><circle cx="637.0" cy="168.2" r="0.9" fill="#545454"/><circle cx="637.0" cy="171.6" r="0.9" fill="#545454"/><circle cx="637.0" cy="175.0" r="0.9" fill="#545454"/><circle cx="637.0" cy="178.4" r="0.9" fill="#545454"/><circle cx="640.4" cy="158.0" r="0.9" fill="#545454"/><circle cx="640.4" cy="161.4" r="0.9" fill="#545454"/><circle cx="640.4" cy="164.8" r="0.9" fill="#545454"/><circle cx="640.4" cy="168.2" r="0.9" fill="#545454"/><circle cx="640.4" cy="171.6" r="0.9" fill="#545454"/><circle cx="640.4" cy="175.0" r="0.9" fill="#545454"/><circle cx="640.4" cy="178.4" r="0.9" fill="#545454"/><path d="M613,179 L641,150" stroke="#545454" stroke-width="1.4"/><path d="M614,191.5 V219 H641" fill="none" stroke="#545454" stroke-width="1.6"/><path d="M614,189 L611.5,195 H616.5 Z M643,219 L637,216.5 V221.5 Z" fill="#545454"/><path d="M614,219 L638.5,194.5" stroke="#545454" stroke-width="1.2"/><circle cx="639" cy="194" r="2.6" fill="#c51f3b"/><path d="M620.5,219 A7,7 0 0 0 618.5,213.5" fill="none" stroke="#545454" stroke-width="0.9"/><text x="617" y="205" font-size="16" fill="#545454" font-family="Liberation Sans">r</text><text x="628" y="216" font-size="15" font-style="italic" fill="#545454" font-family="Liberation Sans">θ</text><text x="627.5" y="247" font-size="16" text-anchor="middle" fill="#545454" stroke="#545454" stroke-width="0.5" font-family="Liberation Sans">in</text><path d="M617.5,252.5 H637.5" stroke="#545454" stroke-width="2.2"/><path d="M613.5,252.5 L619.5,248.5 V256.5 Z M641.5,252.5 L635.5,248.5 V256.5 Z" fill="#545454" stroke="#545454" stroke-width="1" stroke-linejoin="round"/><text x="627.5" y="288.5" font-size="16" text-anchor="middle" fill="#545454" stroke="#545454" stroke-width="0.5" font-family="Liberation Sans">mil</text><path d="M617.5,293.5 H637.5" stroke="#545454" stroke-width="2.2"/><path d="M613.5,293.5 L619.5,289.5 V297.5 Z M641.5,293.5 L635.5,289.5 V297.5 Z" fill="#545454" stroke="#545454" stroke-width="1" stroke-linejoin="round"/><text x="627.5" y="330" font-size="16" text-anchor="middle" fill="#545454" stroke="#545454" stroke-width="0.5" font-family="Liberation Sans">mm</text><path d="M617.5,335 H637.5" stroke="#545454" stroke-width="2.2"/><path d="M613.5,335 L619.5,331 V339 Z M641.5,335 L635.5,331 V339 Z" fill="#545454" stroke="#545454" stroke-width="1" stroke-linejoin="round"/><path d="M613,370.5 H642 M628,356 V385" stroke="#d8d8d8" stroke-width="1"/><path d="M621.5,370.5 H634.5 M628,364 V377" stroke="#1b7fc9" stroke-width="2.6"/><path d="M628.5,371 L637,379.5 L633.5,380 L635.5,384 L633.5,385 L631.5,381 L628.5,383.5 Z" fill="#545454"/><path d="M610,393.5 H644" stroke="#a0a0a0" stroke-width="1"/><path d="M616.5,406 V432.5 M613,432 H641 M616,431 L639,409" fill="none" stroke="#545454" stroke-width="2.2"/><path d="M616.5,425 H623 V432" fill="none" stroke="#545454" stroke-width="0.9"/><path d="M610,443.5 H644" stroke="#a0a0a0" stroke-width="1"/><path d="M612.5,458.5 H641.5 V480 H612.5 V472.5 L615.5,469 L612.5,465.5 Z" fill="none" stroke="#545454" stroke-width="1.3"/><rect x="616.3" y="453.7" width="6.3" height="8.7" fill="#1b7fc9"/><rect x="616.9" y="476.5" width="5.2" height="6.8" fill="#f0f0f0" stroke="#1b7fc9" stroke-width="1.2"/><rect x="625" y="453.7" width="6.3" height="8.7" fill="#1b7fc9"/><rect x="625.6" y="476.5" width="5.2" height="6.8" fill="#f0f0f0" stroke="#1b7fc9" stroke-width="1.2"/><rect x="633.7" y="453.7" width="6.3" height="8.7" fill="#1b7fc9"/><rect x="634.3000000000001" y="476.5" width="5.2" height="6.8" fill="#f0f0f0" stroke="#1b7fc9" stroke-width="1.2"/><path d="M612.3,484 L641.7,454" stroke="#545454" stroke-width="1.4"/><rect x="613.5" y="501" width="27" height="18" fill="#bdbdbd" stroke="#545454" stroke-width="3"/><path d="M626,505 H637 V515 H623 Z" fill="#f4f4f4" stroke="#545454" stroke-width="1"/><path d="M616,508.5 H621" stroke="#545454" stroke-width="2.5"/><path d="M619.5,495 V502 M627.8,495 V502 M636,495 V502" stroke="#1b7fc9" stroke-width="2.2" stroke-linecap="round"/><path d="M619.5,519 V525 M627.8,519 V525 M636,519 V525" stroke="#545454" stroke-width="2.2"/><path d="M612,525.5 L642,495" stroke="#545454" stroke-width="1.4"/><path d="M615.5,538 H640.5" stroke="#545454" stroke-width="3.6"/><path d="M627,538 V556" stroke="#545454" stroke-width="3.6"/><path d="M627,556 V565.5" stroke="#c8c8c8" stroke-width="2.6"/><path d="M612.5,565.5 L642,536" stroke="#545454" stroke-width="1.4"/><path d="M618.7,578.1 L629.8,584.5 L634.5,584.5 L641.7,590" fill="none" stroke="#c51f3b" stroke-width="2.2"/><path d="M625.8,593.2 L633,593.2 L641.7,603.5" fill="none" stroke="#c51f3b" stroke-width="2.2"/><path d="M612.3,578.9 L622.6,590" fill="none" stroke="#545454" stroke-width="2.2"/><path d="M612.3,594 L618.7,598.7 L629.8,598.7 L637.7,606.6" fill="none" stroke="#545454" stroke-width="2.2"/><circle cx="625" cy="592.3" r="3.2" fill="#fff" stroke="#f29100" stroke-width="2.2"/><path d="M610,616.5 H644" stroke="#a0a0a0" stroke-width="1"/><rect x="614.5" y="629.5" width="12" height="6" fill="#fff" stroke="#545454" stroke-width="1.6"/><path d="M619,636 V652 H628 M619,643 H628" fill="none" stroke="#545454" stroke-width="1.6"/><rect x="628" y="639" width="12" height="7" rx="1" fill="#545454"/><rect x="628" y="649" width="12" height="7" rx="1" fill="#545454"/><path d="M614,687 L627,681 L640,687 L627,694 Z" fill="#f29100"/><path d="M614,681 L627,675 L640,681 L627,688 Z" fill="#545454"/><path d="M614,675.5 L627,668 L640,675.5 L627,683 Z" fill="#1b7fc9"/><path d="M615,737 L638,714" stroke="#545454" stroke-width="3"/><path d="M634,718 L640,712" stroke="#545454" stroke-width="4.5" stroke-linecap="round"/><path d="M617,715 L637,735" stroke="#1b7fc9" stroke-width="4" stroke-linecap="round"/><circle cx="617" cy="715" r="5" fill="#1b7fc9"/><path d="M614,710 L619,715" stroke="#f0f0f0" stroke-width="2.5"/></svg>
<svg class="a" style="left:650px;top:99px;overflow:hidden" width="940" height="874" viewBox="650 99 940 874"><rect x="650" y="99" width="940" height="874" fill="#000"/><path d="M667 107h1.2v1.3h-1.2zM667 131h1.2v1.3h-1.2zM667 155h1.2v1.3h-1.2zM667 179h1.2v1.3h-1.2zM667 202h1.2v1.3h-1.2zM667 226h1.2v1.3h-1.2zM667 250h1.2v1.3h-1.2zM667 274h1.2v1.3h-1.2zM667 298h1.2v1.3h-1.2zM667 322h1.2v1.3h-1.2zM667 346h1.2v1.3h-1.2zM667 369h1.2v1.3h-1.2zM667 393h1.2v1.3h-1.2zM667 417h1.2v1.3h-1.2zM667 441h1.2v1.3h-1.2zM667 465h1.2v1.3h-1.2zM667 489h1.2v1.3h-1.2zM667 512h1.2v1.3h-1.2zM667 536h1.2v1.3h-1.2zM667 560h1.2v1.3h-1.2zM667 584h1.2v1.3h-1.2zM667 608h1.2v1.3h-1.2zM667 632h1.2v1.3h-1.2zM667 655h1.2v1.3h-1.2zM667 679h1.2v1.3h-1.2zM667 703h1.2v1.3h-1.2zM667 727h1.2v1.3h-1.2zM667 751h1.2v1.3h-1.2zM667 775h1.2v1.3h-1.2zM667 798h1.2v1.3h-1.2zM667 822h1.2v1.3h-1.2zM667 846h1.2v1.3h-1.2zM667 870h1.2v1.3h-1.2zM667 894h1.2v1.3h-1.2zM667 918h1.2v1.3h-1.2zM667 942h1.2v1.3h-1.2zM667 965h1.2v1.3h-1.2zM691 107h1.2v1.3h-1.2zM691 131h1.2v1.3h-1.2zM691 155h1.2v1.3h-1.2zM691 179h1.2v1.3h-1.2zM691 202h1.2v1.3h-1.2zM691 226h1.2v1.3h-1.2zM691 250h1.2v1.3h-1.2zM691 274h1.2v1.3h-1.2zM691 298h1.2v1.3h-1.2zM691 322h1.2v1.3h-1.2zM691 346h1.2v1.3h-1.2zM691 369h1.2v1.3h-1.2zM691 393h1.2v1.3h-1.2zM691 417h1.2v1.3h-1.2zM691 441h1.2v1.3h-1.2zM691 465h1.2v1.3h-1.2zM691 489h1.2v1.3h-1.2zM691 512h1.2v1.3h-1.2zM691 536h1.2v1.3h-1.2zM691 560h1.2v1.3h-1.2zM691 584h1.2v1.3h-1.2zM691 608h1.2v1.3h-1.2zM691 632h1.2v1.3h-1.2zM691 655h1.2v1.3h-1.2zM691 679h1.2v1.3h-1.2zM691 703h1.2v1.3h-1.2zM691 727h1.2v1.3h-1.2zM691 751h1.2v1.3h-1.2zM691 775h1.2v1.3h-1.2zM691 798h1.2v1.3h-1.2zM691 822h1.2v1.3h-1.2zM691 846h1.2v1.3h-1.2zM691 870h1.2v1.3h-1.2zM691 894h1.2v1.3h-1.2zM691 918h1.2v1.3h-1.2zM691 942h1.2v1.3h-1.2zM691 965h1.2v1.3h-1.2zM714 107h1.2v1.3h-1.2zM714 131h1.2v1.3h-1.2zM714 155h1.2v1.3h-1.2zM714 179h1.2v1.3h-1.2zM714 202h1.2v1.3h-1.2zM714 226h1.2v1.3h-1.2zM714 250h1.2v1.3h-1.2zM714 274h1.2v1.3h-1.2zM714 298h1.2v1.3h-1.2zM714 322h1.2v1.3h-1.2zM714 346h1.2v1.3h-1.2zM714 369h1.2v1.3h-1.2zM714 393h1.2v1.3h-1.2zM714 417h1.2v1.3h-1.2zM714 441h1.2v1.3h-1.2zM714 465h1.2v1.3h-1.2zM714 489h1.2v1.3h-1.2zM714 512h1.2v1.3h-1.2zM714 536h1.2v1.3h-1.2zM714 560h1.2v1.3h-1.2zM714 584h1.2v1.3h-1.2zM714 608h1.2v1.3h-1.2zM714 632h1.2v1.3h-1.2zM714 655h1.2v1.3h-1.2zM714 679h1.2v1.3h-1.2zM714 703h1.2v1.3h-1.2zM714 727h1.2v1.3h-1.2zM714 751h1.2v1.3h-1.2zM714 775h1.2v1.3h-1.2zM714 798h1.2v1.3h-1.2zM714 822h1.2v1.3h-1.2zM714 846h1.2v1.3h-1.2zM714 870h1.2v1.3h-1.2zM714 894h1.2v1.3h-1.2zM714 918h1.2v1.3h-1.2zM714 942h1.2v1.3h-1.2zM714 965h1.2v1.3h-1.2zM738 107h1.2v1.3h-1.2zM738 131h1.2v1.3h-1.2zM738 155h1.2v1.3h-1.2zM738 179h1.2v1.3h-1.2zM738 202h1.2v1.3h-1.2zM738 226h1.2v1.3h-1.2zM738 250h1.2v1.3h-1.2zM738 274h1.2v1.3h-1.2zM738 298h1.2v1.3h-1.2zM738 322h1.2v1.3h-1.2zM738 346h1.2v1.3h-1.2zM738 369h1.2v1.3h-1.2zM738 393h1.2v1.3h-1.2zM738 417h1.2v1.3h-1.2zM738 441h1.2v1.3h-1.2zM738 465h1.2v1.3h-1.2zM738 489h1.2v1.3h-1.2zM738 512h1.2v1.3h-1.2zM738 536h1.2v1.3h-1.2zM738 560h1.2v1.3h-1.2zM738 584h1.2v1.3h-1.2zM738 608h1.2v1.3h-1.2zM738 632h1.2v1.3h-1.2zM738 655h1.2v1.3h-1.2zM738 679h1.2v1.3h-1.2zM738 703h1.2v1.3h-1.2zM738 727h1.2v1.3h-1.2zM738 751h1.2v1.3h-1.2zM738 775h1.2v1.3h-1.2zM738 798h1.2v1.3h-1.2zM738 822h1.2v1.3h-1.2zM738 846h1.2v1.3h-1.2zM738 870h1.2v1.3h-1.2zM738 894h1.2v1.3h-1.2zM738 918h1.2v1.3h-1.2zM738 942h1.2v1.3h-1.2zM738 965h1.2v1.3h-1.2zM762 107h1.2v1.3h-1.2zM762 131h1.2v1.3h-1.2zM762 155h1.2v1.3h-1.2zM762 179h1.2v1.3h-1.2zM762 202h1.2v1.3h-1.2zM762 226h1.2v1.3h-1.2zM762 250h1.2v1.3h-1.2zM762 274h1.2v1.3h-1.2zM762 298h1.2v1.3h-1.2zM762 322h1.2v1.3h-1.2zM762 346h1.2v1.3h-1.2zM762 369h1.2v1.3h-1.2zM762 393h1.2v1.3h-1.2zM762 417h1.2v1.3h-1.2zM762 441h1.2v1.3h-1.2zM762 465h1.2v1.3h-1.2zM762 489h1.2v1.3h-1.2zM762 512h1.2v1.3h-1.2zM762 536h1.2v1.3h-1.2zM762 560h1.2v1.3h-1.2zM762 584h1.2v1.3h-1.2zM762 608h1.2v1.3h-1.2zM762 632h1.2v1.3h-1.2zM762 655h1.2v1.3h-1.2zM762 679h1.2v1.3h-1.2zM762 703h1.2v1.3h-1.2zM762 727h1.2v1.3h-1.2zM762 751h1.2v1.3h-1.2zM762 775h1.2v1.3h-1.2zM762 798h1.2v1.3h-1.2zM762 822h1.2v1.3h-1.2zM762 846h1.2v1.3h-1.2zM762 870h1.2v1.3h-1.2zM762 894h1.2v1.3h-1.2zM762 918h1.2v1.3h-1.2zM762 942h1.2v1.3h-1.2zM762 965h1.2v1.3h-1.2zM786 107h1.2v1.3h-1.2zM786 131h1.2v1.3h-1.2zM786 155h1.2v1.3h-1.2zM786 179h1.2v1.3h-1.2zM786 202h1.2v1.3h-1.2zM786 226h1.2v1.3h-1.2zM786 250h1.2v1.3h-1.2zM786 274h1.2v1.3h-1.2zM786 298h1.2v1.3h-1.2zM786 322h1.2v1.3h-1.2zM786 346h1.2v1.3h-1.2zM786 369h1.2v1.3h-1.2zM786 393h1.2v1.3h-1.2zM786 417h1.2v1.3h-1.2zM786 441h1.2v1.3h-1.2zM786 465h1.2v1.3h-1.2zM786 489h1.2v1.3h-1.2zM786 512h1.2v1.3h-1.2zM786 536h1.2v1.3h-1.2zM786 560h1.2v1.3h-1.2zM786 584h1.2v1.3h-1.2zM786 608h1.2v1.3h-1.2zM786 632h1.2v1.3h-1.2zM786 655h1.2v1.3h-1.2zM786 679h1.2v1.3h-1.2zM786 703h1.2v1.3h-1.2zM786 727h1.2v1.3h-1.2zM786 751h1.2v1.3h-1.2zM786 775h1.2v1.3h-1.2zM786 798h1.2v1.3h-1.2zM786 822h1.2v1.3h-1.2zM786 846h1.2v1.3h-1.2zM786 870h1.2v1.3h-1.2zM786 894h1.2v1.3h-1.2zM786 918h1.2v1.3h-1.2zM786 942h1.2v1.3h-1.2zM786 965h1.2v1.3h-1.2zM810 107h1.2v1.3h-1.2zM810 131h1.2v1.3h-1.2zM810 155h1.2v1.3h-1.2zM810 179h1.2v1.3h-1.2zM810 202h1.2v1.3h-1.2zM810 226h1.2v1.3h-1.2zM810 250h1.2v1.3h-1.2zM810 274h1.2v1.3h-1.2zM810 298h1.2v1.3h-1.2zM810 322h1.2v1.3h-1.2zM810 346h1.2v1.3h-1.2zM810 369h1.2v1.3h-1.2zM810 393h1.2v1.3h-1.2zM810 417h1.2v1.3h-1.2zM810 441h1.2v1.3h-1.2zM810 465h1.2v1.3h-1.2zM810 489h1.2v1.3h-1.2zM810 512h1.2v1.3h-1.2zM810 536h1.2v1.3h-1.2zM810 560h1.2v1.3h-1.2zM810 584h1.2v1.3h-1.2zM810 608h1.2v1.3h-1.2zM810 632h1.2v1.3h-1.2zM810 655h1.2v1.3h-1.2zM810 679h1.2v1.3h-1.2zM810 703h1.2v1.3h-1.2zM810 727h1.2v1.3h-1.2zM810 751h1.2v1.3h-1.2zM810 775h1.2v1.3h-1.2zM810 798h1.2v1.3h-1.2zM810 822h1.2v1.3h-1.2zM810 846h1.2v1.3h-1.2zM810 870h1.2v1.3h-1.2zM810 894h1.2v1.3h-1.2zM810 918h1.2v1.3h-1.2zM810 942h1.2v1.3h-1.2zM810 965h1.2v1.3h-1.2zM834 107h1.2v1.3h-1.2zM834 131h1.2v1.3h-1.2zM834 155h1.2v1.3h-1.2zM834 179h1.2v1.3h-1.2zM834 202h1.2v1.3h-1.2zM834 226h1.2v1.3h-1.2zM834 250h1.2v1.3h-1.2zM834 274h1.2v1.3h-1.2zM834 298h1.2v1.3h-1.2zM834 322h1.2v1.3h-1.2zM834 346h1.2v1.3h-1.2zM834 369h1.2v1.3h-1.2zM834 393h1.2v1.3h-1.2zM834 417h1.2v1.3h-1.2zM834 441h1.2v1.3h-1.2zM834 465h1.2v1.3h-1.2zM834 489h1.2v1.3h-1.2zM834 512h1.2v1.3h-1.2zM834 536h1.2v1.3h-1.2zM834 560h1.2v1.3h-1.2zM834 584h1.2v1.3h-1.2zM834 608h1.2v1.3h-1.2zM834 632h1.2v1.3h-1.2zM834 655h1.2v1.3h-1.2zM834 679h1.2v1.3h-1.2zM834 703h1.2v1.3h-1.2zM834 727h1.2v1.3h-1.2zM834 751h1.2v1.3h-1.2zM834 775h1.2v1.3h-1.2zM834 798h1.2v1.3h-1.2zM834 822h1.2v1.3h-1.2zM834 846h1.2v1.3h-1.2zM834 870h1.2v1.3h-1.2zM834 894h1.2v1.3h-1.2zM834 918h1.2v1.3h-1.2zM834 942h1.2v1.3h-1.2zM834 965h1.2v1.3h-1.2zM858 107h1.2v1.3h-1.2zM858 131h1.2v1.3h-1.2zM858 155h1.2v1.3h-1.2zM858 179h1.2v1.3h-1.2zM858 202h1.2v1.3h-1.2zM858 226h1.2v1.3h-1.2zM858 250h1.2v1.3h-1.2zM858 274h1.2v1.3h-1.2zM858 298h1.2v1.3h-1.2zM858 322h1.2v1.3h-1.2zM858 346h1.2v1.3h-1.2zM858 369h1.2v1.3h-1.2zM858 393h1.2v1.3h-1.2zM858 417h1.2v1.3h-1.2zM858 441h1.2v1.3h-1.2zM858 465h1.2v1.3h-1.2zM858 489h1.2v1.3h-1.2zM858 512h1.2v1.3h-1.2zM858 536h1.2v1.3h-1.2zM858 560h1.2v1.3h-1.2zM858 584h1.2v1.3h-1.2zM858 608h1.2v1.3h-1.2zM858 632h1.2v1.3h-1.2zM858 655h1.2v1.3h-1.2zM858 679h1.2v1.3h-1.2zM858 703h1.2v1.3h-1.2zM858 727h1.2v1.3h-1.2zM858 751h1.2v1.3h-1.2zM858 775h1.2v1.3h-1.2zM858 798h1.2v1.3h-1.2zM858 822h1.2v1.3h-1.2zM858 846h1.2v1.3h-1.2zM858 870h1.2v1.3h-1.2zM858 894h1.2v1.3h-1.2zM858 918h1.2v1.3h-1.2zM858 942h1.2v1.3h-1.2zM858 965h1.2v1.3h-1.2zM881 107h1.2v1.3h-1.2zM881 131h1.2v1.3h-1.2zM881 155h1.2v1.3h-1.2zM881 179h1.2v1.3h-1.2zM881 202h1.2v1.3h-1.2zM881 226h1.2v1.3h-1.2zM881 250h1.2v1.3h-1.2zM881 274h1.2v1.3h-1.2zM881 298h1.2v1.3h-1.2zM881 322h1.2v1.3h-1.2zM881 346h1.2v1.3h-1.2zM881 369h1.2v1.3h-1.2zM881 393h1.2v1.3h-1.2zM881 417h1.2v1.3h-1.2zM881 441h1.2v1.3h-1.2zM881 465h1.2v1.3h-1.2zM881 489h1.2v1.3h-1.2zM881 512h1.2v1.3h-1.2zM881 536h1.2v1.3h-1.2zM881 560h1.2v1.3h-1.2zM881 584h1.2v1.3h-1.2zM881 608h1.2v1.3h-1.2zM881 632h1.2v1.3h-1.2zM881 655h1.2v1.3h-1.2zM881 679h1.2v1.3h-1.2zM881 703h1.2v1.3h-1.2zM881 727h1.2v1.3h-1.2zM881 751h1.2v1.3h-1.2zM881 775h1.2v1.3h-1.2zM881 798h1.2v1.3h-1.2zM881 822h1.2v1.3h-1.2zM881 846h1.2v1.3h-1.2zM881 870h1.2v1.3h-1.2zM881 894h1.2v1.3h-1.2zM881 918h1.2v1.3h-1.2zM881 942h1.2v1.3h-1.2zM881 965h1.2v1.3h-1.2zM905 107h1.2v1.3h-1.2zM905 131h1.2v1.3h-1.2zM905 155h1.2v1.3h-1.2zM905 179h1.2v1.3h-1.2zM905 202h1.2v1.3h-1.2zM905 226h1.2v1.3h-1.2zM905 250h1.2v1.3h-1.2zM905 274h1.2v1.3h-1.2zM905 298h1.2v1.3h-1.2zM905 322h1.2v1.3h-1.2zM905 346h1.2v1.3h-1.2zM905 369h1.2v1.3h-1.2zM905 393h1.2v1.3h-1.2zM905 417h1.2v1.3h-1.2zM905 441h1.2v1.3h-1.2zM905 465h1.2v1.3h-1.2zM905 489h1.2v1.3h-1.2zM905 512h1.2v1.3h-1.2zM905 536h1.2v1.3h-1.2zM905 560h1.2v1.3h-1.2zM905 584h1.2v1.3h-1.2zM905 608h1.2v1.3h-1.2zM905 632h1.2v1.3h-1.2zM905 655h1.2v1.3h-1.2zM905 679h1.2v1.3h-1.2zM905 703h1.2v1.3h-1.2zM905 727h1.2v1.3h-1.2zM905 751h1.2v1.3h-1.2zM905 775h1.2v1.3h-1.2zM905 798h1.2v1.3h-1.2zM905 822h1.2v1.3h-1.2zM905 846h1.2v1.3h-1.2zM905 870h1.2v1.3h-1.2zM905 894h1.2v1.3h-1.2zM905 918h1.2v1.3h-1.2zM905 942h1.2v1.3h-1.2zM905 965h1.2v1.3h-1.2zM929 107h1.2v1.3h-1.2zM929 131h1.2v1.3h-1.2zM929 155h1.2v1.3h-1.2zM929 179h1.2v1.3h-1.2zM929 202h1.2v1.3h-1.2zM929 226h1.2v1.3h-1.2zM929 250h1.2v1.3h-1.2zM929 274h1.2v1.3h-1.2zM929 298h1.2v1.3h-1.2zM929 322h1.2v1.3h-1.2zM929 346h1.2v1.3h-1.2zM929 369h1.2v1.3h-1.2zM929 393h1.2v1.3h-1.2zM929 417h1.2v1.3h-1.2zM929 441h1.2v1.3h-1.2zM929 465h1.2v1.3h-1.2zM929 489h1.2v1.3h-1.2zM929 512h1.2v1.3h-1.2zM929 536h1.2v1.3h-1.2zM929 560h1.2v1.3h-1.2zM929 584h1.2v1.3h-1.2zM929 608h1.2v1.3h-1.2zM929 632h1.2v1.3h-1.2zM929 655h1.2v1.3h-1.2zM929 679h1.2v1.3h-1.2zM929 703h1.2v1.3h-1.2zM929 727h1.2v1.3h-1.2zM929 751h1.2v1.3h-1.2zM929 775h1.2v1.3h-1.2zM929 798h1.2v1.3h-1.2zM929 822h1.2v1.3h-1.2zM929 846h1.2v1.3h-1.2zM929 870h1.2v1.3h-1.2zM929 894h1.2v1.3h-1.2zM929 918h1.2v1.3h-1.2zM929 942h1.2v1.3h-1.2zM929 965h1.2v1.3h-1.2zM953 107h1.2v1.3h-1.2zM953 131h1.2v1.3h-1.2zM953 155h1.2v1.3h-1.2zM953 179h1.2v1.3h-1.2zM953 202h1.2v1.3h-1.2zM953 226h1.2v1.3h-1.2zM953 250h1.2v1.3h-1.2zM953 274h1.2v1.3h-1.2zM953 298h1.2v1.3h-1.2zM953 322h1.2v1.3h-1.2zM953 346h1.2v1.3h-1.2zM953 369h1.2v1.3h-1.2zM953 393h1.2v1.3h-1.2zM953 417h1.2v1.3h-1.2zM953 441h1.2v1.3h-1.2zM953 465h1.2v1.3h-1.2zM953 489h1.2v1.3h-1.2zM953 512h1.2v1.3h-1.2zM953 536h1.2v1.3h-1.2zM953 560h1.2v1.3h-1.2zM953 584h1.2v1.3h-1.2zM953 608h1.2v1.3h-1.2zM953 632h1.2v1.3h-1.2zM953 655h1.2v1.3h-1.2zM953 679h1.2v1.3h-1.2zM953 703h1.2v1.3h-1.2zM953 727h1.2v1.3h-1.2zM953 751h1.2v1.3h-1.2zM953 775h1.2v1.3h-1.2zM953 798h1.2v1.3h-1.2zM953 822h1.2v1.3h-1.2zM953 846h1.2v1.3h-1.2zM953 870h1.2v1.3h-1.2zM953 894h1.2v1.3h-1.2zM953 918h1.2v1.3h-1.2zM953 942h1.2v1.3h-1.2zM953 965h1.2v1.3h-1.2zM977 107h1.2v1.3h-1.2zM977 131h1.2v1.3h-1.2zM977 155h1.2v1.3h-1.2zM977 179h1.2v1.3h-1.2zM977 202h1.2v1.3h-1.2zM977 226h1.2v1.3h-1.2zM977 250h1.2v1.3h-1.2zM977 274h1.2v1.3h-1.2zM977 298h1.2v1.3h-1.2zM977 322h1.2v1.3h-1.2zM977 346h1.2v1.3h-1.2zM977 369h1.2v1.3h-1.2zM977 393h1.2v1.3h-1.2zM977 417h1.2v1.3h-1.2zM977 441h1.2v1.3h-1.2zM977 465h1.2v1.3h-1.2zM977 489h1.2v1.3h-1.2zM977 512h1.2v1.3h-1.2zM977 536h1.2v1.3h-1.2zM977 560h1.2v1.3h-1.2zM977 584h1.2v1.3h-1.2zM977 608h1.2v1.3h-1.2zM977 632h1.2v1.3h-1.2zM977 655h1.2v1.3h-1.2zM977 679h1.2v1.3h-1.2zM977 703h1.2v1.3h-1.2zM977 727h1.2v1.3h-1.2zM977 751h1.2v1.3h-1.2zM977 775h1.2v1.3h-1.2zM977 798h1.2v1.3h-1.2zM977 822h1.2v1.3h-1.2zM977 846h1.2v1.3h-1.2zM977 870h1.2v1.3h-1.2zM977 894h1.2v1.3h-1.2zM977 918h1.2v1.3h-1.2zM977 942h1.2v1.3h-1.2zM977 965h1.2v1.3h-1.2zM1001 107h1.2v1.3h-1.2zM1001 131h1.2v1.3h-1.2zM1001 155h1.2v1.3h-1.2zM1001 179h1.2v1.3h-1.2zM1001 202h1.2v1.3h-1.2zM1001 226h1.2v1.3h-1.2zM1001 250h1.2v1.3h-1.2zM1001 274h1.2v1.3h-1.2zM1001 298h1.2v1.3h-1.2zM1001 322h1.2v1.3h-1.2zM1001 346h1.2v1.3h-1.2zM1001 369h1.2v1.3h-1.2zM1001 393h1.2v1.3h-1.2zM1001 417h1.2v1.3h-1.2zM1001 441h1.2v1.3h-1.2zM1001 465h1.2v1.3h-1.2zM1001 489h1.2v1.3h-1.2zM1001 512h1.2v1.3h-1.2zM1001 536h1.2v1.3h-1.2zM1001 560h1.2v1.3h-1.2zM1001 584h1.2v1.3h-1.2zM1001 608h1.2v1.3h-1.2zM1001 632h1.2v1.3h-1.2zM1001 655h1.2v1.3h-1.2zM1001 679h1.2v1.3h-1.2zM1001 703h1.2v1.3h-1.2zM1001 727h1.2v1.3h-1.2zM1001 751h1.2v1.3h-1.2zM1001 775h1.2v1.3h-1.2zM1001 798h1.2v1.3h-1.2zM1001 822h1.2v1.3h-1.2zM1001 846h1.2v1.3h-1.2zM1001 870h1.2v1.3h-1.2zM1001 894h1.2v1.3h-1.2zM1001 918h1.2v1.3h-1.2zM1001 942h1.2v1.3h-1.2zM1001 965h1.2v1.3h-1.2zM1024 107h1.2v1.3h-1.2zM1024 131h1.2v1.3h-1.2zM1024 155h1.2v1.3h-1.2zM1024 179h1.2v1.3h-1.2zM1024 202h1.2v1.3h-1.2zM1024 226h1.2v1.3h-1.2zM1024 250h1.2v1.3h-1.2zM1024 274h1.2v1.3h-1.2zM1024 298h1.2v1.3h-1.2zM1024 322h1.2v1.3h-1.2zM1024 346h1.2v1.3h-1.2zM1024 369h1.2v1.3h-1.2zM1024 393h1.2v1.3h-1.2zM1024 417h1.2v1.3h-1.2zM1024 441h1.2v1.3h-1.2zM1024 465h1.2v1.3h-1.2zM1024 489h1.2v1.3h-1.2zM1024 512h1.2v1.3h-1.2zM1024 536h1.2v1.3h-1.2zM1024 560h1.2v1.3h-1.2zM1024 584h1.2v1.3h-1.2zM1024 608h1.2v1.3h-1.2zM1024 632h1.2v1.3h-1.2zM1024 655h1.2v1.3h-1.2zM1024 679h1.2v1.3h-1.2zM1024 703h1.2v1.3h-1.2zM1024 727h1.2v1.3h-1.2zM1024 751h1.2v1.3h-1.2zM1024 775h1.2v1.3h-1.2zM1024 798h1.2v1.3h-1.2zM1024 822h1.2v1.3h-1.2zM1024 846h1.2v1.3h-1.2zM1024 870h1.2v1.3h-1.2zM1024 894h1.2v1.3h-1.2zM1024 918h1.2v1.3h-1.2zM1024 942h1.2v1.3h-1.2zM1024 965h1.2v1.3h-1.2zM1048 107h1.2v1.3h-1.2zM1048 131h1.2v1.3h-1.2zM1048 155h1.2v1.3h-1.2zM1048 179h1.2v1.3h-1.2zM1048 202h1.2v1.3h-1.2zM1048 226h1.2v1.3h-1.2zM1048 250h1.2v1.3h-1.2zM1048 274h1.2v1.3h-1.2zM1048 298h1.2v1.3h-1.2zM1048 322h1.2v1.3h-1.2zM1048 346h1.2v1.3h-1.2zM1048 369h1.2v1.3h-1.2zM1048 393h1.2v1.3h-1.2zM1048 417h1.2v1.3h-1.2zM1048 441h1.2v1.3h-1.2zM1048 465h1.2v1.3h-1.2zM1048 489h1.2v1.3h-1.2zM1048 512h1.2v1.3h-1.2zM1048 536h1.2v1.3h-1.2zM1048 560h1.2v1.3h-1.2zM1048 584h1.2v1.3h-1.2zM1048 608h1.2v1.3h-1.2zM1048 632h1.2v1.3h-1.2zM1048 655h1.2v1.3h-1.2zM1048 679h1.2v1.3h-1.2zM1048 703h1.2v1.3h-1.2zM1048 727h1.2v1.3h-1.2zM1048 751h1.2v1.3h-1.2zM1048 775h1.2v1.3h-1.2zM1048 798h1.2v1.3h-1.2zM1048 822h1.2v1.3h-1.2zM1048 846h1.2v1.3h-1.2zM1048 870h1.2v1.3h-1.2zM1048 894h1.2v1.3h-1.2zM1048 918h1.2v1.3h-1.2zM1048 942h1.2v1.3h-1.2zM1048 965h1.2v1.3h-1.2zM1072 107h1.2v1.3h-1.2zM1072 131h1.2v1.3h-1.2zM1072 155h1.2v1.3h-1.2zM1072 179h1.2v1.3h-1.2zM1072 202h1.2v1.3h-1.2zM1072 226h1.2v1.3h-1.2zM1072 250h1.2v1.3h-1.2zM1072 274h1.2v1.3h-1.2zM1072 298h1.2v1.3h-1.2zM1072 322h1.2v1.3h-1.2zM1072 346h1.2v1.3h-1.2zM1072 369h1.2v1.3h-1.2zM1072 393h1.2v1.3h-1.2zM1072 417h1.2v1.3h-1.2zM1072 441h1.2v1.3h-1.2zM1072 465h1.2v1.3h-1.2zM1072 489h1.2v1.3h-1.2zM1072 512h1.2v1.3h-1.2zM1072 536h1.2v1.3h-1.2zM1072 560h1.2v1.3h-1.2zM1072 584h1.2v1.3h-1.2zM1072 608h1.2v1.3h-1.2zM1072 632h1.2v1.3h-1.2zM1072 655h1.2v1.3h-1.2zM1072 679h1.2v1.3h-1.2zM1072 703h1.2v1.3h-1.2zM1072 727h1.2v1.3h-1.2zM1072 751h1.2v1.3h-1.2zM1072 775h1.2v1.3h-1.2zM1072 798h1.2v1.3h-1.2zM1072 822h1.2v1.3h-1.2zM1072 846h1.2v1.3h-1.2zM1072 870h1.2v1.3h-1.2zM1072 894h1.2v1.3h-1.2zM1072 918h1.2v1.3h-1.2zM1072 942h1.2v1.3h-1.2zM1072 965h1.2v1.3h-1.2zM1096 107h1.2v1.3h-1.2zM1096 131h1.2v1.3h-1.2zM1096 155h1.2v1.3h-1.2zM1096 179h1.2v1.3h-1.2zM1096 202h1.2v1.3h-1.2zM1096 226h1.2v1.3h-1.2zM1096 250h1.2v1.3h-1.2zM1096 274h1.2v1.3h-1.2zM1096 298h1.2v1.3h-1.2zM1096 322h1.2v1.3h-1.2zM1096 346h1.2v1.3h-1.2zM1096 369h1.2v1.3h-1.2zM1096 393h1.2v1.3h-1.2zM1096 417h1.2v1.3h-1.2zM1096 441h1.2v1.3h-1.2zM1096 465h1.2v1.3h-1.2zM1096 489h1.2v1.3h-1.2zM1096 512h1.2v1.3h-1.2zM1096 536h1.2v1.3h-1.2zM1096 560h1.2v1.3h-1.2zM1096 584h1.2v1.3h-1.2zM1096 608h1.2v1.3h-1.2zM1096 632h1.2v1.3h-1.2zM1096 655h1.2v1.3h-1.2zM1096 679h1.2v1.3h-1.2zM1096 703h1.2v1.3h-1.2zM1096 727h1.2v1.3h-1.2zM1096 751h1.2v1.3h-1.2zM1096 775h1.2v1.3h-1.2zM1096 798h1.2v1.3h-1.2zM1096 822h1.2v1.3h-1.2zM1096 846h1.2v1.3h-1.2zM1096 870h1.2v1.3h-1.2zM1096 894h1.2v1.3h-1.2zM1096 918h1.2v1.3h-1.2zM1096 942h1.2v1.3h-1.2zM1096 965h1.2v1.3h-1.2zM1120 107h1.2v1.3h-1.2zM1120 131h1.2v1.3h-1.2zM1120 155h1.2v1.3h-1.2zM1120 179h1.2v1.3h-1.2zM1120 202h1.2v1.3h-1.2zM1120 226h1.2v1.3h-1.2zM1120 250h1.2v1.3h-1.2zM1120 274h1.2v1.3h-1.2zM1120 298h1.2v1.3h-1.2zM1120 322h1.2v1.3h-1.2zM1120 346h1.2v1.3h-1.2zM1120 369h1.2v1.3h-1.2zM1120 393h1.2v1.3h-1.2zM1120 417h1.2v1.3h-1.2zM1120 441h1.2v1.3h-1.2zM1120 465h1.2v1.3h-1.2zM1120 489h1.2v1.3h-1.2zM1120 512h1.2v1.3h-1.2zM1120 536h1.2v1.3h-1.2zM1120 560h1.2v1.3h-1.2zM1120 584h1.2v1.3h-1.2zM1120 608h1.2v1.3h-1.2zM1120 632h1.2v1.3h-1.2zM1120 655h1.2v1.3h-1.2zM1120 679h1.2v1.3h-1.2zM1120 703h1.2v1.3h-1.2zM1120 727h1.2v1.3h-1.2zM1120 751h1.2v1.3h-1.2zM1120 775h1.2v1.3h-1.2zM1120 798h1.2v1.3h-1.2zM1120 822h1.2v1.3h-1.2zM1120 846h1.2v1.3h-1.2zM1120 870h1.2v1.3h-1.2zM1120 894h1.2v1.3h-1.2zM1120 918h1.2v1.3h-1.2zM1120 942h1.2v1.3h-1.2zM1120 965h1.2v1.3h-1.2zM1144 107h1.2v1.3h-1.2zM1144 131h1.2v1.3h-1.2zM1144 155h1.2v1.3h-1.2zM1144 179h1.2v1.3h-1.2zM1144 202h1.2v1.3h-1.2zM1144 226h1.2v1.3h-1.2zM1144 250h1.2v1.3h-1.2zM1144 274h1.2v1.3h-1.2zM1144 298h1.2v1.3h-1.2zM1144 322h1.2v1.3h-1.2zM1144 346h1.2v1.3h-1.2zM1144 369h1.2v1.3h-1.2zM1144 393h1.2v1.3h-1.2zM1144 417h1.2v1.3h-1.2zM1144 441h1.2v1.3h-1.2zM1144 465h1.2v1.3h-1.2zM1144 489h1.2v1.3h-1.2zM1144 512h1.2v1.3h-1.2zM1144 536h1.2v1.3h-1.2zM1144 560h1.2v1.3h-1.2zM1144 584h1.2v1.3h-1.2zM1144 608h1.2v1.3h-1.2zM1144 632h1.2v1.3h-1.2zM1144 655h1.2v1.3h-1.2zM1144 679h1.2v1.3h-1.2zM1144 703h1.2v1.3h-1.2zM1144 727h1.2v1.3h-1.2zM1144 751h1.2v1.3h-1.2zM1144 775h1.2v1.3h-1.2zM1144 798h1.2v1.3h-1.2zM1144 822h1.2v1.3h-1.2zM1144 846h1.2v1.3h-1.2zM1144 870h1.2v1.3h-1.2zM1144 894h1.2v1.3h-1.2zM1144 918h1.2v1.3h-1.2zM1144 942h1.2v1.3h-1.2zM1144 965h1.2v1.3h-1.2zM1167 107h1.2v1.3h-1.2zM1167 131h1.2v1.3h-1.2zM1167 155h1.2v1.3h-1.2zM1167 179h1.2v1.3h-1.2zM1167 202h1.2v1.3h-1.2zM1167 226h1.2v1.3h-1.2zM1167 250h1.2v1.3h-1.2zM1167 274h1.2v1.3h-1.2zM1167 298h1.2v1.3h-1.2zM1167 322h1.2v1.3h-1.2zM1167 346h1.2v1.3h-1.2zM1167 369h1.2v1.3h-1.2zM1167 393h1.2v1.3h-1.2zM1167 417h1.2v1.3h-1.2zM1167 441h1.2v1.3h-1.2zM1167 465h1.2v1.3h-1.2zM1167 489h1.2v1.3h-1.2zM1167 512h1.2v1.3h-1.2zM1167 536h1.2v1.3h-1.2zM1167 560h1.2v1.3h-1.2zM1167 584h1.2v1.3h-1.2zM1167 608h1.2v1.3h-1.2zM1167 632h1.2v1.3h-1.2zM1167 655h1.2v1.3h-1.2zM1167 679h1.2v1.3h-1.2zM1167 703h1.2v1.3h-1.2zM1167 727h1.2v1.3h-1.2zM1167 751h1.2v1.3h-1.2zM1167 775h1.2v1.3h-1.2zM1167 798h1.2v1.3h-1.2zM1167 822h1.2v1.3h-1.2zM1167 846h1.2v1.3h-1.2zM1167 870h1.2v1.3h-1.2zM1167 894h1.2v1.3h-1.2zM1167 918h1.2v1.3h-1.2zM1167 942h1.2v1.3h-1.2zM1167 965h1.2v1.3h-1.2zM1191 107h1.2v1.3h-1.2zM1191 131h1.2v1.3h-1.2zM1191 155h1.2v1.3h-1.2zM1191 179h1.2v1.3h-1.2zM1191 202h1.2v1.3h-1.2zM1191 226h1.2v1.3h-1.2zM1191 250h1.2v1.3h-1.2zM1191 274h1.2v1.3h-1.2zM1191 298h1.2v1.3h-1.2zM1191 322h1.2v1.3h-1.2zM1191 346h1.2v1.3h-1.2zM1191 369h1.2v1.3h-1.2zM1191 393h1.2v1.3h-1.2zM1191 417h1.2v1.3h-1.2zM1191 441h1.2v1.3h-1.2zM1191 465h1.2v1.3h-1.2zM1191 489h1.2v1.3h-1.2zM1191 512h1.2v1.3h-1.2zM1191 536h1.2v1.3h-1.2zM1191 560h1.2v1.3h-1.2zM1191 584h1.2v1.3h-1.2zM1191 608h1.2v1.3h-1.2zM1191 632h1.2v1.3h-1.2zM1191 655h1.2v1.3h-1.2zM1191 679h1.2v1.3h-1.2zM1191 703h1.2v1.3h-1.2zM1191 727h1.2v1.3h-1.2zM1191 751h1.2v1.3h-1.2zM1191 775h1.2v1.3h-1.2zM1191 798h1.2v1.3h-1.2zM1191 822h1.2v1.3h-1.2zM1191 846h1.2v1.3h-1.2zM1191 870h1.2v1.3h-1.2zM1191 894h1.2v1.3h-1.2zM1191 918h1.2v1.3h-1.2zM1191 942h1.2v1.3h-1.2zM1191 965h1.2v1.3h-1.2zM1215 107h1.2v1.3h-1.2zM1215 131h1.2v1.3h-1.2zM1215 155h1.2v1.3h-1.2zM1215 179h1.2v1.3h-1.2zM1215 202h1.2v1.3h-1.2zM1215 226h1.2v1.3h-1.2zM1215 250h1.2v1.3h-1.2zM1215 274h1.2v1.3h-1.2zM1215 298h1.2v1.3h-1.2zM1215 322h1.2v1.3h-1.2zM1215 346h1.2v1.3h-1.2zM1215 369h1.2v1.3h-1.2zM1215 393h1.2v1.3h-1.2zM1215 417h1.2v1.3h-1.2zM1215 441h1.2v1.3h-1.2zM1215 465h1.2v1.3h-1.2zM1215 489h1.2v1.3h-1.2zM1215 512h1.2v1.3h-1.2zM1215 536h1.2v1.3h-1.2zM1215 560h1.2v1.3h-1.2zM1215 584h1.2v1.3h-1.2zM1215 608h1.2v1.3h-1.2zM1215 632h1.2v1.3h-1.2zM1215 655h1.2v1.3h-1.2zM1215 679h1.2v1.3h-1.2zM1215 703h1.2v1.3h-1.2zM1215 727h1.2v1.3h-1.2zM1215 751h1.2v1.3h-1.2zM1215 775h1.2v1.3h-1.2zM1215 798h1.2v1.3h-1.2zM1215 822h1.2v1.3h-1.2zM1215 846h1.2v1.3h-1.2zM1215 870h1.2v1.3h-1.2zM1215 894h1.2v1.3h-1.2zM1215 918h1.2v1.3h-1.2zM1215 942h1.2v1.3h-1.2zM1215 965h1.2v1.3h-1.2zM1239 107h1.2v1.3h-1.2zM1239 131h1.2v1.3h-1.2zM1239 155h1.2v1.3h-1.2zM1239 179h1.2v1.3h-1.2zM1239 202h1.2v1.3h-1.2zM1239 226h1.2v1.3h-1.2zM1239 250h1.2v1.3h-1.2zM1239 274h1.2v1.3h-1.2zM1239 298h1.2v1.3h-1.2zM1239 322h1.2v1.3h-1.2zM1239 346h1.2v1.3h-1.2zM1239 369h1.2v1.3h-1.2zM1239 393h1.2v1.3h-1.2zM1239 417h1.2v1.3h-1.2zM1239 441h1.2v1.3h-1.2zM1239 465h1.2v1.3h-1.2zM1239 489h1.2v1.3h-1.2zM1239 512h1.2v1.3h-1.2zM1239 536h1.2v1.3h-1.2zM1239 560h1.2v1.3h-1.2zM1239 584h1.2v1.3h-1.2zM1239 608h1.2v1.3h-1.2zM1239 632h1.2v1.3h-1.2zM1239 655h1.2v1.3h-1.2zM1239 679h1.2v1.3h-1.2zM1239 703h1.2v1.3h-1.2zM1239 727h1.2v1.3h-1.2zM1239 751h1.2v1.3h-1.2zM1239 775h1.2v1.3h-1.2zM1239 798h1.2v1.3h-1.2zM1239 822h1.2v1.3h-1.2zM1239 846h1.2v1.3h-1.2zM1239 870h1.2v1.3h-1.2zM1239 894h1.2v1.3h-1.2zM1239 918h1.2v1.3h-1.2zM1239 942h1.2v1.3h-1.2zM1239 965h1.2v1.3h-1.2zM1263 107h1.2v1.3h-1.2zM1263 131h1.2v1.3h-1.2zM1263 155h1.2v1.3h-1.2zM1263 179h1.2v1.3h-1.2zM1263 202h1.2v1.3h-1.2zM1263 226h1.2v1.3h-1.2zM1263 250h1.2v1.3h-1.2zM1263 274h1.2v1.3h-1.2zM1263 298h1.2v1.3h-1.2zM1263 322h1.2v1.3h-1.2zM1263 346h1.2v1.3h-1.2zM1263 369h1.2v1.3h-1.2zM1263 393h1.2v1.3h-1.2zM1263 417h1.2v1.3h-1.2zM1263 441h1.2v1.3h-1.2zM1263 465h1.2v1.3h-1.2zM1263 489h1.2v1.3h-1.2zM1263 512h1.2v1.3h-1.2zM1263 536h1.2v1.3h-1.2zM1263 560h1.2v1.3h-1.2zM1263 584h1.2v1.3h-1.2zM1263 608h1.2v1.3h-1.2zM1263 632h1.2v1.3h-1.2zM1263 655h1.2v1.3h-1.2zM1263 679h1.2v1.3h-1.2zM1263 703h1.2v1.3h-1.2zM1263 727h1.2v1.3h-1.2zM1263 751h1.2v1.3h-1.2zM1263 775h1.2v1.3h-1.2zM1263 798h1.2v1.3h-1.2zM1263 822h1.2v1.3h-1.2zM1263 846h1.2v1.3h-1.2zM1263 870h1.2v1.3h-1.2zM1263 894h1.2v1.3h-1.2zM1263 918h1.2v1.3h-1.2zM1263 942h1.2v1.3h-1.2zM1263 965h1.2v1.3h-1.2zM1287 107h1.2v1.3h-1.2zM1287 131h1.2v1.3h-1.2zM1287 155h1.2v1.3h-1.2zM1287 179h1.2v1.3h-1.2zM1287 202h1.2v1.3h-1.2zM1287 226h1.2v1.3h-1.2zM1287 250h1.2v1.3h-1.2zM1287 274h1.2v1.3h-1.2zM1287 298h1.2v1.3h-1.2zM1287 322h1.2v1.3h-1.2zM1287 346h1.2v1.3h-1.2zM1287 369h1.2v1.3h-1.2zM1287 393h1.2v1.3h-1.2zM1287 417h1.2v1.3h-1.2zM1287 441h1.2v1.3h-1.2zM1287 465h1.2v1.3h-1.2zM1287 489h1.2v1.3h-1.2zM1287 512h1.2v1.3h-1.2zM1287 536h1.2v1.3h-1.2zM1287 560h1.2v1.3h-1.2zM1287 584h1.2v1.3h-1.2zM1287 608h1.2v1.3h-1.2zM1287 632h1.2v1.3h-1.2zM1287 655h1.2v1.3h-1.2zM1287 679h1.2v1.3h-1.2zM1287 703h1.2v1.3h-1.2zM1287 727h1.2v1.3h-1.2zM1287 751h1.2v1.3h-1.2zM1287 775h1.2v1.3h-1.2zM1287 798h1.2v1.3h-1.2zM1287 822h1.2v1.3h-1.2zM1287 846h1.2v1.3h-1.2zM1287 870h1.2v1.3h-1.2zM1287 894h1.2v1.3h-1.2zM1287 918h1.2v1.3h-1.2zM1287 942h1.2v1.3h-1.2zM1287 965h1.2v1.3h-1.2zM1310 107h1.2v1.3h-1.2zM1310 131h1.2v1.3h-1.2zM1310 155h1.2v1.3h-1.2zM1310 179h1.2v1.3h-1.2zM1310 202h1.2v1.3h-1.2zM1310 226h1.2v1.3h-1.2zM1310 250h1.2v1.3h-1.2zM1310 274h1.2v1.3h-1.2zM1310 298h1.2v1.3h-1.2zM1310 322h1.2v1.3h-1.2zM1310 346h1.2v1.3h-1.2zM1310 369h1.2v1.3h-1.2zM1310 393h1.2v1.3h-1.2zM1310 417h1.2v1.3h-1.2zM1310 441h1.2v1.3h-1.2zM1310 465h1.2v1.3h-1.2zM1310 489h1.2v1.3h-1.2zM1310 512h1.2v1.3h-1.2zM1310 536h1.2v1.3h-1.2zM1310 560h1.2v1.3h-1.2zM1310 584h1.2v1.3h-1.2zM1310 608h1.2v1.3h-1.2zM1310 632h1.2v1.3h-1.2zM1310 655h1.2v1.3h-1.2zM1310 679h1.2v1.3h-1.2zM1310 703h1.2v1.3h-1.2zM1310 727h1.2v1.3h-1.2zM1310 751h1.2v1.3h-1.2zM1310 775h1.2v1.3h-1.2zM1310 798h1.2v1.3h-1.2zM1310 822h1.2v1.3h-1.2zM1310 846h1.2v1.3h-1.2zM1310 870h1.2v1.3h-1.2zM1310 894h1.2v1.3h-1.2zM1310 918h1.2v1.3h-1.2zM1310 942h1.2v1.3h-1.2zM1310 965h1.2v1.3h-1.2zM1334 107h1.2v1.3h-1.2zM1334 131h1.2v1.3h-1.2zM1334 155h1.2v1.3h-1.2zM1334 179h1.2v1.3h-1.2zM1334 202h1.2v1.3h-1.2zM1334 226h1.2v1.3h-1.2zM1334 250h1.2v1.3h-1.2zM1334 274h1.2v1.3h-1.2zM1334 298h1.2v1.3h-1.2zM1334 322h1.2v1.3h-1.2zM1334 346h1.2v1.3h-1.2zM1334 369h1.2v1.3h-1.2zM1334 393h1.2v1.3h-1.2zM1334 417h1.2v1.3h-1.2zM1334 441h1.2v1.3h-1.2zM1334 465h1.2v1.3h-1.2zM1334 489h1.2v1.3h-1.2zM1334 512h1.2v1.3h-1.2zM1334 536h1.2v1.3h-1.2zM1334 560h1.2v1.3h-1.2zM1334 584h1.2v1.3h-1.2zM1334 608h1.2v1.3h-1.2zM1334 632h1.2v1.3h-1.2zM1334 655h1.2v1.3h-1.2zM1334 679h1.2v1.3h-1.2zM1334 703h1.2v1.3h-1.2zM1334 727h1.2v1.3h-1.2zM1334 751h1.2v1.3h-1.2zM1334 775h1.2v1.3h-1.2zM1334 798h1.2v1.3h-1.2zM1334 822h1.2v1.3h-1.2zM1334 846h1.2v1.3h-1.2zM1334 870h1.2v1.3h-1.2zM1334 894h1.2v1.3h-1.2zM1334 918h1.2v1.3h-1.2zM1334 942h1.2v1.3h-1.2zM1334 965h1.2v1.3h-1.2zM1358 107h1.2v1.3h-1.2zM1358 131h1.2v1.3h-1.2zM1358 155h1.2v1.3h-1.2zM1358 179h1.2v1.3h-1.2zM1358 202h1.2v1.3h-1.2zM1358 226h1.2v1.3h-1.2zM1358 250h1.2v1.3h-1.2zM1358 274h1.2v1.3h-1.2zM1358 298h1.2v1.3h-1.2zM1358 322h1.2v1.3h-1.2zM1358 346h1.2v1.3h-1.2zM1358 369h1.2v1.3h-1.2zM1358 393h1.2v1.3h-1.2zM1358 417h1.2v1.3h-1.2zM1358 441h1.2v1.3h-1.2zM1358 465h1.2v1.3h-1.2zM1358 489h1.2v1.3h-1.2zM1358 512h1.2v1.3h-1.2zM1358 536h1.2v1.3h-1.2zM1358 560h1.2v1.3h-1.2zM1358 584h1.2v1.3h-1.2zM1358 608h1.2v1.3h-1.2zM1358 632h1.2v1.3h-1.2zM1358 655h1.2v1.3h-1.2zM1358 679h1.2v1.3h-1.2zM1358 703h1.2v1.3h-1.2zM1358 727h1.2v1.3h-1.2zM1358 751h1.2v1.3h-1.2zM1358 775h1.2v1.3h-1.2zM1358 798h1.2v1.3h-1.2zM1358 822h1.2v1.3h-1.2zM1358 846h1.2v1.3h-1.2zM1358 870h1.2v1.3h-1.2zM1358 894h1.2v1.3h-1.2zM1358 918h1.2v1.3h-1.2zM1358 942h1.2v1.3h-1.2zM1358 965h1.2v1.3h-1.2zM1382 107h1.2v1.3h-1.2zM1382 131h1.2v1.3h-1.2zM1382 155h1.2v1.3h-1.2zM1382 179h1.2v1.3h-1.2zM1382 202h1.2v1.3h-1.2zM1382 226h1.2v1.3h-1.2zM1382 250h1.2v1.3h-1.2zM1382 274h1.2v1.3h-1.2zM1382 298h1.2v1.3h-1.2zM1382 322h1.2v1.3h-1.2zM1382 346h1.2v1.3h-1.2zM1382 369h1.2v1.3h-1.2zM1382 393h1.2v1.3h-1.2zM1382 417h1.2v1.3h-1.2zM1382 441h1.2v1.3h-1.2zM1382 465h1.2v1.3h-1.2zM1382 489h1.2v1.3h-1.2zM1382 512h1.2v1.3h-1.2zM1382 536h1.2v1.3h-1.2zM1382 560h1.2v1.3h-1.2zM1382 584h1.2v1.3h-1.2zM1382 608h1.2v1.3h-1.2zM1382 632h1.2v1.3h-1.2zM1382 655h1.2v1.3h-1.2zM1382 679h1.2v1.3h-1.2zM1382 703h1.2v1.3h-1.2zM1382 727h1.2v1.3h-1.2zM1382 751h1.2v1.3h-1.2zM1382 775h1.2v1.3h-1.2zM1382 798h1.2v1.3h-1.2zM1382 822h1.2v1.3h-1.2zM1382 846h1.2v1.3h-1.2zM1382 870h1.2v1.3h-1.2zM1382 894h1.2v1.3h-1.2zM1382 918h1.2v1.3h-1.2zM1382 942h1.2v1.3h-1.2zM1382 965h1.2v1.3h-1.2zM1406 107h1.2v1.3h-1.2zM1406 131h1.2v1.3h-1.2zM1406 155h1.2v1.3h-1.2zM1406 179h1.2v1.3h-1.2zM1406 202h1.2v1.3h-1.2zM1406 226h1.2v1.3h-1.2zM1406 250h1.2v1.3h-1.2zM1406 274h1.2v1.3h-1.2zM1406 298h1.2v1.3h-1.2zM1406 322h1.2v1.3h-1.2zM1406 346h1.2v1.3h-1.2zM1406 369h1.2v1.3h-1.2zM1406 393h1.2v1.3h-1.2zM1406 417h1.2v1.3h-1.2zM1406 441h1.2v1.3h-1.2zM1406 465h1.2v1.3h-1.2zM1406 489h1.2v1.3h-1.2zM1406 512h1.2v1.3h-1.2zM1406 536h1.2v1.3h-1.2zM1406 560h1.2v1.3h-1.2zM1406 584h1.2v1.3h-1.2zM1406 608h1.2v1.3h-1.2zM1406 632h1.2v1.3h-1.2zM1406 655h1.2v1.3h-1.2zM1406 679h1.2v1.3h-1.2zM1406 703h1.2v1.3h-1.2zM1406 727h1.2v1.3h-1.2zM1406 751h1.2v1.3h-1.2zM1406 775h1.2v1.3h-1.2zM1406 798h1.2v1.3h-1.2zM1406 822h1.2v1.3h-1.2zM1406 846h1.2v1.3h-1.2zM1406 870h1.2v1.3h-1.2zM1406 894h1.2v1.3h-1.2zM1406 918h1.2v1.3h-1.2zM1406 942h1.2v1.3h-1.2zM1406 965h1.2v1.3h-1.2zM1430 107h1.2v1.3h-1.2zM1430 131h1.2v1.3h-1.2zM1430 155h1.2v1.3h-1.2zM1430 179h1.2v1.3h-1.2zM1430 202h1.2v1.3h-1.2zM1430 226h1.2v1.3h-1.2zM1430 250h1.2v1.3h-1.2zM1430 274h1.2v1.3h-1.2zM1430 298h1.2v1.3h-1.2zM1430 322h1.2v1.3h-1.2zM1430 346h1.2v1.3h-1.2zM1430 369h1.2v1.3h-1.2zM1430 393h1.2v1.3h-1.2zM1430 417h1.2v1.3h-1.2zM1430 441h1.2v1.3h-1.2zM1430 465h1.2v1.3h-1.2zM1430 489h1.2v1.3h-1.2zM1430 512h1.2v1.3h-1.2zM1430 536h1.2v1.3h-1.2zM1430 560h1.2v1.3h-1.2zM1430 584h1.2v1.3h-1.2zM1430 608h1.2v1.3h-1.2zM1430 632h1.2v1.3h-1.2zM1430 655h1.2v1.3h-1.2zM1430 679h1.2v1.3h-1.2zM1430 703h1.2v1.3h-1.2zM1430 727h1.2v1.3h-1.2zM1430 751h1.2v1.3h-1.2zM1430 775h1.2v1.3h-1.2zM1430 798h1.2v1.3h-1.2zM1430 822h1.2v1.3h-1.2zM1430 846h1.2v1.3h-1.2zM1430 870h1.2v1.3h-1.2zM1430 894h1.2v1.3h-1.2zM1430 918h1.2v1.3h-1.2zM1430 942h1.2v1.3h-1.2zM1430 965h1.2v1.3h-1.2zM1454 107h1.2v1.3h-1.2zM1454 131h1.2v1.3h-1.2zM1454 155h1.2v1.3h-1.2zM1454 179h1.2v1.3h-1.2zM1454 202h1.2v1.3h-1.2zM1454 226h1.2v1.3h-1.2zM1454 250h1.2v1.3h-1.2zM1454 274h1.2v1.3h-1.2zM1454 298h1.2v1.3h-1.2zM1454 322h1.2v1.3h-1.2zM1454 346h1.2v1.3h-1.2zM1454 369h1.2v1.3h-1.2zM1454 393h1.2v1.3h-1.2zM1454 417h1.2v1.3h-1.2zM1454 441h1.2v1.3h-1.2zM1454 465h1.2v1.3h-1.2zM1454 489h1.2v1.3h-1.2zM1454 512h1.2v1.3h-1.2zM1454 536h1.2v1.3h-1.2zM1454 560h1.2v1.3h-1.2zM1454 584h1.2v1.3h-1.2zM1454 608h1.2v1.3h-1.2zM1454 632h1.2v1.3h-1.2zM1454 655h1.2v1.3h-1.2zM1454 679h1.2v1.3h-1.2zM1454 703h1.2v1.3h-1.2zM1454 727h1.2v1.3h-1.2zM1454 751h1.2v1.3h-1.2zM1454 775h1.2v1.3h-1.2zM1454 798h1.2v1.3h-1.2zM1454 822h1.2v1.3h-1.2zM1454 846h1.2v1.3h-1.2zM1454 870h1.2v1.3h-1.2zM1454 894h1.2v1.3h-1.2zM1454 918h1.2v1.3h-1.2zM1454 942h1.2v1.3h-1.2zM1454 965h1.2v1.3h-1.2zM1477 107h1.2v1.3h-1.2zM1477 131h1.2v1.3h-1.2zM1477 155h1.2v1.3h-1.2zM1477 179h1.2v1.3h-1.2zM1477 202h1.2v1.3h-1.2zM1477 226h1.2v1.3h-1.2zM1477 250h1.2v1.3h-1.2zM1477 274h1.2v1.3h-1.2zM1477 298h1.2v1.3h-1.2zM1477 322h1.2v1.3h-1.2zM1477 346h1.2v1.3h-1.2zM1477 369h1.2v1.3h-1.2zM1477 393h1.2v1.3h-1.2zM1477 417h1.2v1.3h-1.2zM1477 441h1.2v1.3h-1.2zM1477 465h1.2v1.3h-1.2zM1477 489h1.2v1.3h-1.2zM1477 512h1.2v1.3h-1.2zM1477 536h1.2v1.3h-1.2zM1477 560h1.2v1.3h-1.2zM1477 584h1.2v1.3h-1.2zM1477 608h1.2v1.3h-1.2zM1477 632h1.2v1.3h-1.2zM1477 655h1.2v1.3h-1.2zM1477 679h1.2v1.3h-1.2zM1477 703h1.2v1.3h-1.2zM1477 727h1.2v1.3h-1.2zM1477 751h1.2v1.3h-1.2zM1477 775h1.2v1.3h-1.2zM1477 798h1.2v1.3h-1.2zM1477 822h1.2v1.3h-1.2zM1477 846h1.2v1.3h-1.2zM1477 870h1.2v1.3h-1.2zM1477 894h1.2v1.3h-1.2zM1477 918h1.2v1.3h-1.2zM1477 942h1.2v1.3h-1.2zM1477 965h1.2v1.3h-1.2zM1501 107h1.2v1.3h-1.2zM1501 131h1.2v1.3h-1.2zM1501 155h1.2v1.3h-1.2zM1501 179h1.2v1.3h-1.2zM1501 202h1.2v1.3h-1.2zM1501 226h1.2v1.3h-1.2zM1501 250h1.2v1.3h-1.2zM1501 274h1.2v1.3h-1.2zM1501 298h1.2v1.3h-1.2zM1501 322h1.2v1.3h-1.2zM1501 346h1.2v1.3h-1.2zM1501 369h1.2v1.3h-1.2zM1501 393h1.2v1.3h-1.2zM1501 417h1.2v1.3h-1.2zM1501 441h1.2v1.3h-1.2zM1501 465h1.2v1.3h-1.2zM1501 489h1.2v1.3h-1.2zM1501 512h1.2v1.3h-1.2zM1501 536h1.2v1.3h-1.2zM1501 560h1.2v1.3h-1.2zM1501 584h1.2v1.3h-1.2zM1501 608h1.2v1.3h-1.2zM1501 632h1.2v1.3h-1.2zM1501 655h1.2v1.3h-1.2zM1501 679h1.2v1.3h-1.2zM1501 703h1.2v1.3h-1.2zM1501 727h1.2v1.3h-1.2zM1501 751h1.2v1.3h-1.2zM1501 775h1.2v1.3h-1.2zM1501 798h1.2v1.3h-1.2zM1501 822h1.2v1.3h-1.2zM1501 846h1.2v1.3h-1.2zM1501 870h1.2v1.3h-1.2zM1501 894h1.2v1.3h-1.2zM1501 918h1.2v1.3h-1.2zM1501 942h1.2v1.3h-1.2zM1501 965h1.2v1.3h-1.2zM1525 107h1.2v1.3h-1.2zM1525 131h1.2v1.3h-1.2zM1525 155h1.2v1.3h-1.2zM1525 179h1.2v1.3h-1.2zM1525 202h1.2v1.3h-1.2zM1525 226h1.2v1.3h-1.2zM1525 250h1.2v1.3h-1.2zM1525 274h1.2v1.3h-1.2zM1525 298h1.2v1.3h-1.2zM1525 322h1.2v1.3h-1.2zM1525 346h1.2v1.3h-1.2zM1525 369h1.2v1.3h-1.2zM1525 393h1.2v1.3h-1.2zM1525 417h1.2v1.3h-1.2zM1525 441h1.2v1.3h-1.2zM1525 465h1.2v1.3h-1.2zM1525 489h1.2v1.3h-1.2zM1525 512h1.2v1.3h-1.2zM1525 536h1.2v1.3h-1.2zM1525 560h1.2v1.3h-1.2zM1525 584h1.2v1.3h-1.2zM1525 608h1.2v1.3h-1.2zM1525 632h1.2v1.3h-1.2zM1525 655h1.2v1.3h-1.2zM1525 679h1.2v1.3h-1.2zM1525 703h1.2v1.3h-1.2zM1525 727h1.2v1.3h-1.2zM1525 751h1.2v1.3h-1.2zM1525 775h1.2v1.3h-1.2zM1525 798h1.2v1.3h-1.2zM1525 822h1.2v1.3h-1.2zM1525 846h1.2v1.3h-1.2zM1525 870h1.2v1.3h-1.2zM1525 894h1.2v1.3h-1.2zM1525 918h1.2v1.3h-1.2zM1525 942h1.2v1.3h-1.2zM1525 965h1.2v1.3h-1.2zM1549 107h1.2v1.3h-1.2zM1549 131h1.2v1.3h-1.2zM1549 155h1.2v1.3h-1.2zM1549 179h1.2v1.3h-1.2zM1549 202h1.2v1.3h-1.2zM1549 226h1.2v1.3h-1.2zM1549 250h1.2v1.3h-1.2zM1549 274h1.2v1.3h-1.2zM1549 298h1.2v1.3h-1.2zM1549 322h1.2v1.3h-1.2zM1549 346h1.2v1.3h-1.2zM1549 369h1.2v1.3h-1.2zM1549 393h1.2v1.3h-1.2zM1549 417h1.2v1.3h-1.2zM1549 441h1.2v1.3h-1.2zM1549 465h1.2v1.3h-1.2zM1549 489h1.2v1.3h-1.2zM1549 512h1.2v1.3h-1.2zM1549 536h1.2v1.3h-1.2zM1549 560h1.2v1.3h-1.2zM1549 584h1.2v1.3h-1.2zM1549 608h1.2v1.3h-1.2zM1549 632h1.2v1.3h-1.2zM1549 655h1.2v1.3h-1.2zM1549 679h1.2v1.3h-1.2zM1549 703h1.2v1.3h-1.2zM1549 727h1.2v1.3h-1.2zM1549 751h1.2v1.3h-1.2zM1549 775h1.2v1.3h-1.2zM1549 798h1.2v1.3h-1.2zM1549 822h1.2v1.3h-1.2zM1549 846h1.2v1.3h-1.2zM1549 870h1.2v1.3h-1.2zM1549 894h1.2v1.3h-1.2zM1549 918h1.2v1.3h-1.2zM1549 942h1.2v1.3h-1.2zM1549 965h1.2v1.3h-1.2zM1573 107h1.2v1.3h-1.2zM1573 131h1.2v1.3h-1.2zM1573 155h1.2v1.3h-1.2zM1573 179h1.2v1.3h-1.2zM1573 202h1.2v1.3h-1.2zM1573 226h1.2v1.3h-1.2zM1573 250h1.2v1.3h-1.2zM1573 274h1.2v1.3h-1.2zM1573 298h1.2v1.3h-1.2zM1573 322h1.2v1.3h-1.2zM1573 346h1.2v1.3h-1.2zM1573 369h1.2v1.3h-1.2zM1573 393h1.2v1.3h-1.2zM1573 417h1.2v1.3h-1.2zM1573 441h1.2v1.3h-1.2zM1573 465h1.2v1.3h-1.2zM1573 489h1.2v1.3h-1.2zM1573 512h1.2v1.3h-1.2zM1573 536h1.2v1.3h-1.2zM1573 560h1.2v1.3h-1.2zM1573 584h1.2v1.3h-1.2zM1573 608h1.2v1.3h-1.2zM1573 632h1.2v1.3h-1.2zM1573 655h1.2v1.3h-1.2zM1573 679h1.2v1.3h-1.2zM1573 703h1.2v1.3h-1.2zM1573 727h1.2v1.3h-1.2zM1573 751h1.2v1.3h-1.2zM1573 775h1.2v1.3h-1.2zM1573 798h1.2v1.3h-1.2zM1573 822h1.2v1.3h-1.2zM1573 846h1.2v1.3h-1.2zM1573 870h1.2v1.3h-1.2zM1573 894h1.2v1.3h-1.2zM1573 918h1.2v1.3h-1.2zM1573 942h1.2v1.3h-1.2zM1573 965h1.2v1.3h-1.2z" fill="#7c7c7c"/><path d="M1096.5 98V972M650 584.5H1590" stroke="#000090" stroke-width="1"/><clipPath id="bc"><rect x="650" y="575" width="940" height="75"/></clipPath><circle cx="1096.4" cy="514.5" r="186.5" fill="none" stroke="#0000c0" stroke-width="1" clip-path="url(#bc)"/><mask id="cm"><rect x="650" y="98" width="940" height="874" fill="#000"/><circle cx="1096.4" cy="512" r="186" fill="#fff"/><ellipse cx="1096.4" cy="530" rx="165" ry="184" fill="#000"/></mask><rect x="900" y="300" width="400" height="400" fill="#c2c2c2" mask="url(#cm)"/><path d="M973.51 648 A183.3 183.3 0 1 1 1219.29 648" fill="none" stroke="#008484" stroke-width="5.6"/><path d="M975.3,708.0 L975.3,494.0 L1007.0,494.0 L1007.0,434.2 L975.3,434.2 L975.3,420.0 L1028.4,397.3 L1054.0,390.8 L1075.0,387.0 L1096.4,385.5 L1117.8,387.0 L1137.0,390.5 L1157.5,397.3 L1217.5,420.0 L1217.5,434.2 L1185.8,434.2 L1185.8,494.0 L1217.5,494.0 L1217.5,708.0" fill="none" stroke="#008484" stroke-width="5.6" stroke-linejoin="miter" stroke-linecap="round"/><path d="M975.3,542.3 H1017 V644.7 H1175.8 V542.3 H1217.5" fill="none" stroke="#008484" stroke-width="5.6" stroke-linejoin="miter"/><circle cx="1096.4" cy="524" r="36" fill="none" stroke="#008484" stroke-width="5.6"/><rect x="1047.8" y="578.7" width="97.4" height="48.1" fill="none" stroke="#008484" stroke-width="5.6" stroke-linejoin="round"/><path d="M1028.6 705.8H1068.6M1123.4 705.8H1164.8" stroke="#008484" stroke-width="6" stroke-linecap="round"/><path d="M975 703H1217" stroke="#0000c0" stroke-width="1"/><circle cx="977.1" cy="465" r="24" fill="#870000"/><circle cx="977.1" cy="465" r="23.7" fill="none" stroke="#00a000" stroke-width="0.8" stroke-dasharray="3 5"/><circle cx="977.1" cy="465" r="15" fill="#000" stroke="#c07800" stroke-width="1"/><circle cx="1215.7" cy="465" r="24" fill="#870000"/><circle cx="1215.7" cy="465" r="23.7" fill="none" stroke="#00a000" stroke-width="0.8" stroke-dasharray="3 5"/><circle cx="1215.7" cy="465" r="15" fill="#000" stroke="#c07800" stroke-width="1"/><circle cx="1000.8" cy="702.9" r="17" fill="#870000"/><circle cx="1000.8" cy="702.9" r="16.7" fill="none" stroke="#00a000" stroke-width="0.8" stroke-dasharray="3 5"/><circle cx="1000.8" cy="702.9" r="10.2" fill="#000" stroke="#4a1a00" stroke-width="0.8"/><circle cx="1096.4" cy="702.9" r="17" fill="#870000"/><circle cx="1096.4" cy="702.9" r="16.7" fill="none" stroke="#00a000" stroke-width="0.8" stroke-dasharray="3 5"/><circle cx="1096.4" cy="702.9" r="10.2" fill="#000" stroke="#4a1a00" stroke-width="0.8"/><circle cx="1192" cy="702.9" r="17" fill="#870000"/><circle cx="1192" cy="702.9" r="16.7" fill="none" stroke="#00a000" stroke-width="0.8" stroke-dasharray="3 5"/><circle cx="1192" cy="702.9" r="10.2" fill="#000" stroke="#4a1a00" stroke-width="0.8"/><path d="M0.34,0 L0,0.73 H0.7 M0.52,0.3 V1" transform="translate(969.75,454.50) scale(21)" fill="none" stroke="#e0e0e0" stroke-width="0.0762" stroke-linecap="round" stroke-linejoin="round"/><path d="M0.58,0 H0.08 L0.03,0.45 Q0.15,0.38 0.31,0.38 Q0.62,0.38 0.62,0.69 Q0.62,1 0.31,1 Q0.1,1 0,0.9" transform="translate(1209.19,454.50) scale(21)" fill="none" stroke="#e0e0e0" stroke-width="0.0762" stroke-linecap="round" stroke-linejoin="round"/><path d="M0,0.3 L0.3,0 V1 M0,1 H0.56" transform="translate(996.32,694.90) scale(16)" fill="none" stroke="#e0e0e0" stroke-width="0.1000" stroke-linecap="round" stroke-linejoin="round"/><path d="M0.03,0.16 Q0.12,0 0.32,0 Q0.62,0 0.62,0.28 Q0.62,0.46 0.42,0.62 L0,1 H0.64" transform="translate(1091.28,694.90) scale(16)" fill="none" stroke="#e0e0e0" stroke-width="0.1000" stroke-linecap="round" stroke-linejoin="round"/><path d="M0.03,0 H0.6 L0.3,0.4 Q0.62,0.4 0.62,0.7 Q0.62,1 0.31,1 Q0.1,1 0,0.9" transform="translate(1187.04,694.90) scale(16)" fill="none" stroke="#e0e0e0" stroke-width="0.1000" stroke-linecap="round" stroke-linejoin="round"/><path d="M0,0 V0.68 Q0,1 0.28,1 Q0.56,1 0.56,0.68 V0" transform="translate(1079.00,296.00) scale(24)" fill="none" stroke="#008484" stroke-width="0.1583" stroke-linecap="round" stroke-linejoin="round"/><path d="M0,0.14 Q0.12,0 0.3,0 Q0.56,0 0.56,0.25 Q0.56,0.42 0.38,0.5 Q0.18,0.58 0.18,0.75 M0.18,0.97 L0.18,0.975" transform="translate(1102.00,296.00) scale(24)" fill="none" stroke="#008484" stroke-width="0.1583" stroke-linecap="round" stroke-linejoin="round"/><path d="M0,1 V0 H0.4 Q0.6,0 0.6,0.26 Q0.6,0.52 0.4,0.52 H0 M0.38,0.52 L0.6,1" transform="translate(887.00,723.20) scale(23.5)" fill="none" stroke="#8c8c8c" stroke-width="0.1745" stroke-linecap="round" stroke-linejoin="round"/><path d="M0.45,0 H0 V1 H0.45 M0,0.485 H0.36" transform="translate(911.40,723.20) scale(23.5)" fill="none" stroke="#8c8c8c" stroke-width="0.1745" stroke-linecap="round" stroke-linejoin="round"/><path d="M0.6,0.1 Q0.48,0 0.3,0 Q0.03,0 0.03,0.24 Q0.03,0.42 0.3,0.48 Q0.6,0.55 0.6,0.76 Q0.6,1 0.3,1 Q0.12,1 0,0.9" transform="translate(933.00,723.20) scale(23.5)" fill="none" stroke="#8c8c8c" stroke-width="0.1745" stroke-linecap="round" stroke-linejoin="round"/><path d="M0,0.62 H0.78" transform="translate(957.00,723.20) scale(23.5)" fill="none" stroke="#8c8c8c" stroke-width="0.1745" stroke-linecap="round" stroke-linejoin="round"/><path d="M0,0 H0.61 M0.305,0 V1" transform="translate(982.80,723.20) scale(23.5)" fill="none" stroke="#8c8c8c" stroke-width="0.1745" stroke-linecap="round" stroke-linejoin="round"/><path d="M0,0 V1 M0.56,0 V1 M0,0.485 H0.56" transform="translate(1003.30,723.20) scale(23.5)" fill="none" stroke="#8c8c8c" stroke-width="0.1745" stroke-linecap="round" stroke-linejoin="round"/><path d="M0,1.1 H0.78" transform="translate(1023.50,723.20) scale(23.5)" fill="none" stroke="#8c8c8c" stroke-width="0.1745" stroke-linecap="round" stroke-linejoin="round"/><path d="M0,0 L0.22,1 L0.46,0.25 L0.7,1 L0.92,0" transform="translate(1043.00,723.20) scale(23.5)" fill="none" stroke="#8c8c8c" stroke-width="0.1745" stroke-linecap="round" stroke-linejoin="round"/><path d="M0,0 V1 M0.56,0 V1 M0,0.485 H0.56" transform="translate(1072.70,723.20) scale(23.5)" fill="none" stroke="#8c8c8c" stroke-width="0.1745" stroke-linecap="round" stroke-linejoin="round"/><path d="M0,0.3 L0.3,0 V1 M0,1 H0.56" transform="translate(1099.00,723.20) scale(23.5)" fill="none" stroke="#8c8c8c" stroke-width="0.1745" stroke-linecap="round" stroke-linejoin="round"/><path d="M0.54,0.05 Q0.44,0 0.32,0 Q0,0 0,0.55 Q0,1 0.32,1 Q0.64,1 0.64,0.68 Q0.64,0.38 0.32,0.38 Q0.08,0.38 0,0.58" transform="translate(1120.50,723.20) scale(23.5)" fill="none" stroke="#8c8c8c" stroke-width="0.1745" stroke-linecap="round" stroke-linejoin="round"/><path d="M0.31,0 Q0.62,0 0.62,0.5 Q0.62,1 0.31,1 Q0,1 0,0.5 Q0,0 0.31,0 Z" transform="translate(1144.00,723.20) scale(23.5)" fill="none" stroke="#8c8c8c" stroke-width="0.1745" stroke-linecap="round" stroke-linejoin="round"/><path d="M0,0.62 H0.78" transform="translate(1167.50,723.20) scale(23.5)" fill="none" stroke="#8c8c8c" stroke-width="0.1745" stroke-linecap="round" stroke-linejoin="round"/><path d="M0,0.3 L0.3,0 V1 M0,1 H0.56" transform="translate(1195.00,723.20) scale(23.5)" fill="none" stroke="#8c8c8c" stroke-width="0.1745" stroke-linecap="round" stroke-linejoin="round"/><path d="M0,0.62 H0.78" transform="translate(1219.50,723.20) scale(23.5)" fill="none" stroke="#8c8c8c" stroke-width="0.1745" stroke-linecap="round" stroke-linejoin="round"/><path d="M0,0.3 L0.3,0 V1 M0,1 H0.56" transform="translate(1248.30,723.20) scale(23.5)" fill="none" stroke="#8c8c8c" stroke-width="0.1745" stroke-linecap="round" stroke-linejoin="round"/><path d="M0.31,0 Q0.62,0 0.62,0.5 Q0.62,1 0.31,1 Q0,1 0,0.5 Q0,0 0.31,0 Z" transform="translate(1271.00,723.20) scale(23.5)" fill="none" stroke="#8c8c8c" stroke-width="0.1745" stroke-linecap="round" stroke-linejoin="round"/><path d="M0.34,0 L0,0.73 H0.7 M0.52,0.3 V1" transform="translate(1293.00,723.20) scale(23.5)" fill="none" stroke="#8c8c8c" stroke-width="0.1745" stroke-linecap="round" stroke-linejoin="round"/><path d="M1191.5 400V480M1151 440.5H1231" stroke="#8a8a8a" stroke-width="1"/><circle cx="911.5" cy="709" r="1.5" fill="#0000d0"/></svg>
<div class="a" style="left:650px;top:98px;width:941px;height:1px;background:#f8f8f8"></div>
<div class="a" style="left:1590px;top:98px;width:1px;height:875px;background:#f8f8f8"></div>
<div class="a" style="left:649px;top:98px;width:1px;height:876px;background:#a8a8a8"></div>
<div class="a" style="left:649px;top:973px;width:942px;height:1px;background:#a8a8a8"></div>
<div class="a" style="left:1590px;top:98px;width:45px;height:875px;background:#f0f0f0"></div>
<div class="a" style="left:1635px;top:98px;width:5px;height:875px;background:#e3e3e3"></div>
<svg class="a" style="left:0;top:0" width="1920" height="1000"><rect x="1594.5" y="104.5" width="37" height="37" fill="#b8daf5" stroke="#2a86d8" stroke-width="1"/><path d="M1607,113.5 L1622,126 L1615.5,127 L1619,134 L1616,135.5 L1612.5,128.5 L1607,133 Z" fill="#545454"/><path d="M1596,147.5 H1630" stroke="#a0a0a0" stroke-width="1"/><circle cx="1613" cy="173" r="13.5" fill="none" stroke="#f29100" stroke-width="1.3"/><circle cx="1613" cy="173" r="8.3" fill="none" stroke="#f29100" stroke-width="5"/><defs><pattern id="hat" width="5" height="5" patternUnits="userSpaceOnUse" patternTransform="rotate(45)"><rect width="5" height="5" fill="#fff"/><rect width="2.6" height="5" fill="#545454"/></pattern></defs><path d="M1601.5,226.5 V215 H1608.5 V201.5 H1625.5 V226.5 Z" fill="url(#hat)" stroke="#545454" stroke-width="1.6"/><path d="M1596,238.5 H1630" stroke="#a0a0a0" stroke-width="1"/><path d="M1602,276.5 L1624,251" stroke="#545454" stroke-width="2.4" stroke-linecap="round"/><path d="M1603,317 Q1603,295 1624,293" fill="none" stroke="#545454" stroke-width="2.4" stroke-linecap="round"/><rect x="1602.5" y="336" width="22" height="20" fill="#bfbfbf" stroke="#545454" stroke-width="2.2"/><circle cx="1613.3" cy="388" r="11.3" fill="#bfbfbf" stroke="#545454" stroke-width="2.2"/><path d="M1602,417 L1625,425 L1620,439 L1603,440.5 L1611,428.5 Z" fill="#bfbfbf" stroke="#545454" stroke-width="2.2" stroke-linejoin="round"/><path d="M1600,469 H1626" stroke="#1b7fc9" stroke-width="1.4"/><path d="M1603,480 Q1601,470 1613,469 Q1623,468 1621,458" fill="none" stroke="#545454" stroke-width="2"/><circle cx="1613" cy="469" r="2" fill="#fff" stroke="#1b7fc9" stroke-width="1.2"/><rect x="1599" y="467.5" width="3" height="3" fill="#1b7fc9"/><rect x="1624" y="467.5" width="3" height="3" fill="#1b7fc9"/><rect x="1600" y="497" width="28" height="27" rx="3" fill="#545454"/><path d="M1603,520 L1611,509 L1616,514 L1619,511 L1625,520 Z" fill="#fff"/><circle cx="1620" cy="504.5" r="3" fill="#fff"/><path d="M1601,540 H1625 M1613,540 V564" stroke="#545454" stroke-width="3.4"/><rect x="1601" y="581" width="24" height="21" fill="#bfbfbf" stroke="#545454" stroke-width="2"/><path d="M1605,587 H1620 M1605,591.5 H1620 M1605,596 H1616" stroke="#545454" stroke-width="1.4"/><rect x="1599.5" y="618" width="29" height="29" fill="#f8f8f8" stroke="#828282" stroke-width="1"/><rect x="1599.5" y="618" width="29" height="8" fill="#828282"/><path d="M1599.5,633 H1628.5 M1599.5,640 H1628.5 M1609.5,618 V647 M1619,618 V647" stroke="#828282" stroke-width="1"/><path d="M1602,663.5 H1627 M1613,685.5 H1627 M1623.5,666 V683" stroke="#545454" stroke-width="1.1"/><path d="M1623.5,664.5 L1621,669 H1626 Z M1623.5,684.5 L1621,680 H1626 Z" fill="#545454"/><circle cx="1602.5" cy="663.5" r="3.2" fill="#1b7fc9"/><circle cx="1614" cy="685.5" r="3.2" fill="#1b7fc9"/><path d="M1623,693 L1631,685 V693 Z" fill="#000"/><path d="M1603.5,702 L1619,716.5 L1612,717.5 L1616,725 L1612.5,727 L1608.5,719 L1603.5,724 Z" fill="#545454"/><circle cx="1620" cy="720.5" r="8" fill="#c51f3b"/><path d="M1616.5,717 L1623.5,724 M1623.5,717 L1616.5,724" stroke="#fff" stroke-width="2"/><path d="M1596,739.5 H1630" stroke="#a0a0a0" stroke-width="1"/><circle cx="1604" cy="762" r="3.3" fill="none" stroke="#1b7fc9" stroke-width="1.5"/><path d="M1598,762 H1610 M1604,756 V768" stroke="#545454" stroke-width="1.1"/><path d="M1607,765 L1612,770 H1629" fill="none" stroke="#545454" stroke-width="1.1"/><text x="1612" y="767" font-size="9.5" fill="#545454" font-family="Liberation Sans">(0,0)</text><circle cx="1601.0" cy="795.5" r="1.9" fill="#545454"/><circle cx="1601.0" cy="803.2" r="1.9" fill="#545454"/><circle cx="1601.0" cy="810.9" r="1.9" fill="#545454"/><circle cx="1601.0" cy="818.6" r="1.9" fill="#545454"/><circle cx="1608.7" cy="795.5" r="1.9" fill="#545454"/><circle cx="1608.7" cy="803.2" r="1.9" fill="#545454"/><circle cx="1608.7" cy="810.9" r="1.9" fill="#545454"/><circle cx="1608.7" cy="818.6" r="1.9" fill="#545454"/><circle cx="1616.4" cy="795.5" r="1.9" fill="#545454"/><circle cx="1616.4" cy="803.2" r="1.9" fill="#545454"/><circle cx="1616.4" cy="810.9" r="1.9" fill="#545454"/><circle cx="1616.4" cy="818.6" r="1.9" fill="#545454"/><circle cx="1624.1" cy="795.5" r="1.9" fill="#545454"/><circle cx="1624.1" cy="803.2" r="1.9" fill="#545454"/><circle cx="1624.1" cy="810.9" r="1.9" fill="#545454"/><circle cx="1624.1" cy="818.6" r="1.9" fill="#545454"/><path d="M1599,811 H1619 M1608.7,801 V821" stroke="#1b7fc9" stroke-width="2.4"/><path d="M1600,851 L1622.5,834.5 L1628,842 L1605.5,858.5 Z" fill="none" stroke="#545454" stroke-width="2.4" stroke-linejoin="round"/><path d="M1607,850 L1609,852 M1611.5,846.5 L1614.5,849.5 M1616.5,843 L1618.5,845" stroke="#545454" stroke-width="1.4"/></svg>
<div class="a" style="left:1640px;top:98px;width:280px;height:875px;background:#f0f0f0"></div>
<div class="a" style="left:1640px;top:98px;width:280px;height:26px;background:#b9b9b9"></div>
<div class="t" style="left:1644px;top:103px;font-size:16px;color:#000;"><span style="font-size:15px">外观</span></div>
<div class="a" style="left:1697px;top:131px;width:52px;height:27px;background:#f0f0f0;border:1px solid #d9d9d9;border-bottom:none"></div>
<div class="a" style="left:1641px;top:130px;width:56px;height:28px;background:#fff;border:1px solid #d9d9d9;border-bottom:none"></div>
<div class="t" style="left:1648px;top:135px;font-size:16px;color:#000;"><span style="font-size:15px">层</span></div>
<div class="t" style="left:1702px;top:137px;font-size:16px;color:#000;"><span style="font-size:15px">对象</span></div>
<div class="a" style="left:1640px;top:157px;width:279px;height:534px;background:#fff;border:1px solid #d9d9d9"></div>
<div class="a" style="left:1644px;top:158px;width:273px;height:418px;background:#f0f0f0"></div>
<div class="a" style="left:1644px;top:313px;width:251px;height:21px;background:#dadada"></div>
<div class="a" style="left:1663px;top:162px;width:18px;height:15px;background:#840000"></div>
<div class="t" style="left:1708px;top:163.5px;font-size:13.5px;color:#000;"><span style="font-size:13.5px;letter-spacing:-0.648px">F.Cu</span></div>
<div class="a" style="left:1663px;top:184px;width:18px;height:15px;background:#c2c200"></div>
<div class="t" style="left:1708px;top:185.5px;font-size:13.5px;color:#8a8a8a;"><span style="font-size:13px">内层</span></div>
<div class="a" style="left:1663px;top:206px;width:18px;height:15px;background:#008400"></div>
<div class="t" style="left:1708px;top:207.5px;font-size:13.5px;color:#000;"><span style="font-size:13.5px;letter-spacing:-0.489px">B.Cu</span></div>
<div class="a" style="left:1663px;top:228px;width:18px;height:15px;background:#840084"></div>
<div class="t" style="left:1708px;top:229.5px;font-size:13.5px;color:#000;"><span style="font-size:13.5px;letter-spacing:-0.252px">F.Adhesive</span></div>
<div class="a" style="left:1663px;top:250px;width:18px;height:15px;background:#000084"></div>
<div class="t" style="left:1708px;top:251.5px;font-size:13.5px;color:#000;"><span style="font-size:13.5px;letter-spacing:-0.189px">B.Adhesive</span></div>
<div class="a" style="left:1663px;top:272px;width:18px;height:15px;background:#840000"></div>
<div class="t" style="left:1708px;top:273.5px;font-size:13.5px;color:#000;"><span style="font-size:13.5px;letter-spacing:-0.510px">F.Paste</span></div>
<div class="a" style="left:1663px;top:294px;width:18px;height:15px;background:#00c2c2"></div>
<div class="t" style="left:1708px;top:295.5px;font-size:13.5px;color:#000;"><span style="font-size:13.5px;letter-spacing:-0.420px">B.Paste</span></div>
<div class="a" style="left:1663px;top:316px;width:18px;height:15px;background:#008484"></div>
<div class="t" style="left:1708px;top:317.5px;font-size:13.5px;color:#000;"><span style="font-size:13.5px;letter-spacing:-0.368px">F.Silkscreen</span></div>
<div class="a" style="left:1663px;top:338px;width:18px;height:15px;background:#840084"></div>
<div class="t" style="left:1708px;top:339.5px;font-size:13.5px;color:#000;"><span style="font-size:13.5px;letter-spacing:-0.315px">B.Silkscreen</span></div>
<div class="a" style="left:1663px;top:360px;width:18px;height:15px;background:#840084"></div>
<div class="t" style="left:1708px;top:361.5px;font-size:13.5px;color:#000;"><span style="font-size:13.5px;letter-spacing:-0.266px">F.Mask</span></div>
<div class="a" style="left:1663px;top:382px;width:18px;height:15px;background:#848400"></div>
<div class="t" style="left:1708px;top:383.5px;font-size:13.5px;color:#000;"><span style="font-size:13.5px;letter-spacing:-0.160px">B.Mask</span></div>
<div class="a" style="left:1663px;top:404px;width:18px;height:15px;background:#c2c2c2"></div>
<div class="t" style="left:1708px;top:405.5px;font-size:13.5px;color:#000;"><span style="font-size:13.5px;letter-spacing:-0.036px">User.Drawings</span></div>
<div class="a" style="left:1663px;top:426px;width:18px;height:15px;background:#000084"></div>
<div class="t" style="left:1708px;top:427.5px;font-size:13.5px;color:#000;"><span style="font-size:13.5px;letter-spacing:-0.031px">User.Comments</span></div>
<div class="a" style="left:1663px;top:448px;width:18px;height:15px;background:#008400"></div>
<div class="t" style="left:1708px;top:449.5px;font-size:13.5px;color:#000;"><span style="font-size:13.5px;letter-spacing:-0.340px">User.Eco1</span></div>
<div class="a" style="left:1663px;top:470px;width:18px;height:15px;background:#c2c200"></div>
<div class="t" style="left:1708px;top:471.5px;font-size:13.5px;color:#000;"><span style="font-size:13.5px;letter-spacing:-0.340px">User.Eco2</span></div>
<div class="a" style="left:1663px;top:492px;width:18px;height:15px;background:#c2c200"></div>
<div class="t" style="left:1708px;top:493.5px;font-size:13.5px;color:#000;"><span style="font-size:13.5px;letter-spacing:-0.274px">Edge.Cuts</span></div>
<div class="a" style="left:1663px;top:514px;width:18px;height:15px;background:#c200c2"></div>
<div class="t" style="left:1708px;top:515.5px;font-size:13.5px;color:#000;"><span style="font-size:13.5px;letter-spacing:0.370px">Margin</span></div>
<div class="a" style="left:1663px;top:536px;width:18px;height:15px;background:#c2c2c2"></div>
<div class="t" style="left:1708px;top:537.5px;font-size:13.5px;color:#000;"><span style="font-size:13.5px;letter-spacing:-0.071px">F.Courtyard</span></div>
<div class="a" style="left:1663px;top:558px;width:18px;height:15px;background:#848484"></div>
<div class="t" style="left:1708px;top:559.5px;font-size:13.5px;color:#000;"><span style="font-size:13.5px;letter-spacing:-0.013px">B.Courtyard</span></div>
<svg class="a" style="left:0;top:0" width="1920" height="1042"><circle cx="1695" cy="169.5" r="7.8" fill="#5a5a5a"/><path d="M1689.3,169.5 Q1695,164.5 1700.7,169.5 Q1695,174.5 1689.3,169.5 Z" fill="#fff"/><circle cx="1695" cy="169.5" r="1.9" fill="none" stroke="#5a5a5a" stroke-width="1.1"/><circle cx="1695" cy="191.5" r="7.8" fill="#5a5a5a"/><path d="M1689.3,191.5 Q1695,186.5 1700.7,191.5 Q1695,196.5 1689.3,191.5 Z" fill="#fff"/><circle cx="1695" cy="191.5" r="1.9" fill="none" stroke="#5a5a5a" stroke-width="1.1"/><circle cx="1695" cy="213.5" r="7.8" fill="#5a5a5a"/><path d="M1689.3,213.5 Q1695,208.5 1700.7,213.5 Q1695,218.5 1689.3,213.5 Z" fill="#fff"/><circle cx="1695" cy="213.5" r="1.9" fill="none" stroke="#5a5a5a" stroke-width="1.1"/><circle cx="1695" cy="235.5" r="7.8" fill="#5a5a5a"/><path d="M1689.3,235.5 Q1695,230.5 1700.7,235.5 Q1695,240.5 1689.3,235.5 Z" fill="#fff"/><circle cx="1695" cy="235.5" r="1.9" fill="none" stroke="#5a5a5a" stroke-width="1.1"/><circle cx="1695" cy="257.5" r="7.8" fill="#5a5a5a"/><path d="M1689.3,257.5 Q1695,252.5 1700.7,257.5 Q1695,262.5 1689.3,257.5 Z" fill="#fff"/><circle cx="1695" cy="257.5" r="1.9" fill="none" stroke="#5a5a5a" stroke-width="1.1"/><circle cx="1695" cy="279.5" r="7.8" fill="#5a5a5a"/><path d="M1689.3,279.5 Q1695,274.5 1700.7,279.5 Q1695,284.5 1689.3,279.5 Z" fill="#fff"/><circle cx="1695" cy="279.5" r="1.9" fill="none" stroke="#5a5a5a" stroke-width="1.1"/><circle cx="1695" cy="301.5" r="7.8" fill="#5a5a5a"/><path d="M1689.3,301.5 Q1695,296.5 1700.7,301.5 Q1695,306.5 1689.3,301.5 Z" fill="#fff"/><circle cx="1695" cy="301.5" r="1.9" fill="none" stroke="#5a5a5a" stroke-width="1.1"/><circle cx="1695" cy="323.5" r="7.8" fill="#5a5a5a"/><path d="M1689.3,323.5 Q1695,318.5 1700.7,323.5 Q1695,328.5 1689.3,323.5 Z" fill="#fff"/><circle cx="1695" cy="323.5" r="1.9" fill="none" stroke="#5a5a5a" stroke-width="1.1"/><circle cx="1695" cy="345.5" r="7.8" fill="#5a5a5a"/><path d="M1689.3,345.5 Q1695,340.5 1700.7,345.5 Q1695,350.5 1689.3,345.5 Z" fill="#fff"/><circle cx="1695" cy="345.5" r="1.9" fill="none" stroke="#5a5a5a" stroke-width="1.1"/><circle cx="1695" cy="367.5" r="7.8" fill="#5a5a5a"/><path d="M1689.3,367.5 Q1695,362.5 1700.7,367.5 Q1695,372.5 1689.3,367.5 Z" fill="#fff"/><circle cx="1695" cy="367.5" r="1.9" fill="none" stroke="#5a5a5a" stroke-width="1.1"/><circle cx="1695" cy="389.5" r="7.8" fill="#5a5a5a"/><path d="M1689.3,389.5 Q1695,384.5 1700.7,389.5 Q1695,394.5 1689.3,389.5 Z" fill="#fff"/><circle cx="1695" cy="389.5" r="1.9" fill="none" stroke="#5a5a5a" stroke-width="1.1"/><circle cx="1695" cy="411.5" r="7.8" fill="#5a5a5a"/><path d="M1689.3,411.5 Q1695,406.5 1700.7,411.5 Q1695,416.5 1689.3,411.5 Z" fill="#fff"/><circle cx="1695" cy="411.5" r="1.9" fill="none" stroke="#5a5a5a" stroke-width="1.1"/><circle cx="1695" cy="433.5" r="7.8" fill="#5a5a5a"/><path d="M1689.3,433.5 Q1695,428.5 1700.7,433.5 Q1695,438.5 1689.3,433.5 Z" fill="#fff"/><circle cx="1695" cy="433.5" r="1.9" fill="none" stroke="#5a5a5a" stroke-width="1.1"/><circle cx="1695" cy="455.5" r="7.8" fill="#5a5a5a"/><path d="M1689.3,455.5 Q1695,450.5 1700.7,455.5 Q1695,460.5 1689.3,455.5 Z" fill="#fff"/><circle cx="1695" cy="455.5" r="1.9" fill="none" stroke="#5a5a5a" stroke-width="1.1"/><circle cx="1695" cy="477.5" r="7.8" fill="#5a5a5a"/><path d="M1689.3,477.5 Q1695,472.5 1700.7,477.5 Q1695,482.5 1689.3,477.5 Z" fill="#fff"/><circle cx="1695" cy="477.5" r="1.9" fill="none" stroke="#5a5a5a" stroke-width="1.1"/><circle cx="1695" cy="499.5" r="7.8" fill="#5a5a5a"/><path d="M1689.3,499.5 Q1695,494.5 1700.7,499.5 Q1695,504.5 1689.3,499.5 Z" fill="#fff"/><circle cx="1695" cy="499.5" r="1.9" fill="none" stroke="#5a5a5a" stroke-width="1.1"/><circle cx="1695" cy="521.5" r="7.8" fill="#5a5a5a"/><path d="M1689.3,521.5 Q1695,516.5 1700.7,521.5 Q1695,526.5 1689.3,521.5 Z" fill="#fff"/><circle cx="1695" cy="521.5" r="1.9" fill="none" stroke="#5a5a5a" stroke-width="1.1"/><circle cx="1695" cy="543.5" r="7.8" fill="#5a5a5a"/><path d="M1689.3,543.5 Q1695,538.5 1700.7,543.5 Q1695,548.5 1689.3,543.5 Z" fill="#fff"/><circle cx="1695" cy="543.5" r="1.9" fill="none" stroke="#5a5a5a" stroke-width="1.1"/><circle cx="1695" cy="565.5" r="7.8" fill="#5a5a5a"/><path d="M1689.3,565.5 Q1695,560.5 1700.7,565.5 Q1695,570.5 1689.3,565.5 Z" fill="#fff"/><circle cx="1695" cy="565.5" r="1.9" fill="none" stroke="#5a5a5a" stroke-width="1.1"/><path d="M1651.5,317.5 L1657,323.5 L1651.5,329.5 Z" fill="#3a3af0"/><path d="M1900,173 L1905.5,167.5 L1911,173" fill="none" stroke="#606060" stroke-width="1.4"/><path d="M1900,562 L1905.5,567.5 L1911,562" fill="none" stroke="#606060" stroke-width="1.4"/></svg>
<div class="a" style="left:1896px;top:158px;width:20px;height:417px;background:#f0f0f0"></div>
<div class="a" style="left:1897px;top:178px;width:18px;height:280px;background:#cdcdcd"></div>
<svg class="a" style="left:0;top:0" width="1920" height="1042"><path d="M1900,173 L1905.5,167.5 L1911,173" fill="none" stroke="#606060" stroke-width="1.4"/><path d="M1900,562 L1905.5,567.5 L1911,562" fill="none" stroke="#606060" stroke-width="1.4"/><path d="M1652,587 H1662 L1657,594 Z" fill="#000"/><circle cx="1657.5" cy="643.5" r="7" fill="#fff" stroke="#333" stroke-width="1"/><circle cx="1657.5" cy="643.5" r="4" fill="#333"/><circle cx="1746" cy="643.5" r="7" fill="#fff" stroke="#333" stroke-width="1"/><circle cx="1834.5" cy="643.5" r="7" fill="#fff" stroke="#333" stroke-width="1"/><path d="M1649,653.5 H1910" stroke="#a0a0a0" stroke-width="1"/><rect x="1649.5" y="665.5" width="15" height="15" fill="#fff" stroke="#333" stroke-width="1"/></svg>
<div class="t" style="left:1667px;top:584px;font-size:13.5px;color:#000;"><span style="font-size:13px">层显示选项</span></div>
<div class="t" style="left:1649px;top:614.5px;font-size:13.5px;color:#000;"><span style="font-size:13px">非活动层</span><span style="font-size:13.5px;letter-spacing:-0.068px">&nbsp;(H):</span></div>
<div class="t" style="left:1669px;top:636px;font-size:13.5px;color:#000;"><span style="font-size:13px">正常</span></div>
<div class="t" style="left:1758px;top:636px;font-size:13.5px;color:#000;"><span style="font-size:13px">暗显</span></div>
<div class="t" style="left:1847px;top:636px;font-size:13.5px;color:#000;"><span style="font-size:13px">隐藏</span></div>
<div class="t" style="left:1669px;top:665px;font-size:13.5px;color:#000;"><span style="font-size:13px">翻转电路板视图</span></div>
<div class="t" style="left:1647px;top:706.5px;font-size:13.5px;color:#000;"><span style="font-size:13px">预设</span><span style="font-size:13.5px;letter-spacing:0.032px">&nbsp;(Ctrl+Tab):</span></div>
<div class="a" style="left:1647px;top:725px;width:266px;height:28px;background:#e1e1e1;border:1px solid #adadad"></div>
<div class="t" style="left:1652px;top:732px;font-size:13.5px;color:#000;"><span style="font-size:13.5px;letter-spacing:0.472px">---</span></div>
<div class="t" style="left:1647px;top:760.5px;font-size:13.5px;color:#000;"><span style="font-size:13px">视角</span><span style="font-size:13.5px;letter-spacing:0.004px">&nbsp;(Shift+Tab):</span></div>
<div class="a" style="left:1647px;top:779px;width:266px;height:28px;background:#e1e1e1;border:1px solid #adadad"></div>
<div class="t" style="left:1652px;top:786px;font-size:13.5px;color:#000;"><span style="font-size:13.5px;letter-spacing:0.472px">---</span></div>
<svg class="a" style="left:0;top:0" width="1920" height="1042"><path d="M1897,736.5 L1902,741.5 L1907,736.5" fill="none" stroke="#404040" stroke-width="1.2"/><path d="M1897,790.5 L1902,795.5 L1907,790.5" fill="none" stroke="#404040" stroke-width="1.2"/></svg>
<div class="a" style="left:1640px;top:819px;width:280px;height:25px;background:#b9b9b9"></div>
<div class="t" style="left:1644px;top:823px;font-size:16px;color:#000;"><span style="font-size:15px">选择筛选器</span></div>
<div class="t" style="left:1665px;top:852px;font-size:13.5px;color:#000;"><span style="font-size:13px">所有项目</span></div>
<div class="t" style="left:1754px;top:852px;font-size:13.5px;color:#000;"><span style="font-size:13px">锁定项目</span></div>
<div class="t" style="left:1665px;top:872px;font-size:13.5px;color:#000;"><span style="font-size:13px">封装</span></div>
<div class="t" style="left:1754px;top:872px;font-size:13.5px;color:#000;"><span style="font-size:13px">文本</span></div>
<div class="t" style="left:1665px;top:892px;font-size:13.5px;color:#000;"><span style="font-size:13px">走线</span></div>
<div class="t" style="left:1754px;top:892px;font-size:13.5px;color:#000;"><span style="font-size:13px">过孔</span></div>
<div class="t" style="left:1665px;top:912px;font-size:13.5px;color:#000;"><span style="font-size:13px">焊盘</span></div>
<div class="t" style="left:1754px;top:912px;font-size:13.5px;color:#000;"><span style="font-size:13px">图形</span></div>
<div class="t" style="left:1665px;top:932px;font-size:13.5px;color:#000;"><span style="font-size:13px">填充区</span></div>
<div class="t" style="left:1754px;top:932px;font-size:13.5px;color:#000;"><span style="font-size:13px">规则域</span></div>
<div class="t" style="left:1665px;top:952px;font-size:13.5px;color:#000;"><span style="font-size:13px">测量标注</span></div>
<div class="t" style="left:1754px;top:952px;font-size:13.5px;color:#000;"><span style="font-size:13px">其他项目</span></div>
<svg class="a" style="left:0;top:0" width="1920" height="1042"><rect x="1645.5" y="851.5" width="15" height="15" fill="#fff" stroke="#333" stroke-width="1"/><path d="M1648.5,859 L1651.5,862.5 L1657.5,855.5" fill="none" stroke="#333" stroke-width="1.2"/><rect x="1734.5" y="851.5" width="15" height="15" fill="#fff" stroke="#333" stroke-width="1"/><path d="M1737.5,859 L1740.5,862.5 L1746.5,855.5" fill="none" stroke="#333" stroke-width="1.2"/><rect x="1645.5" y="871.5" width="15" height="15" fill="#fff" stroke="#333" stroke-width="1"/><path d="M1648.5,879 L1651.5,882.5 L1657.5,875.5" fill="none" stroke="#333" stroke-width="1.2"/><rect x="1734.5" y="871.5" width="15" height="15" fill="#fff" stroke="#333" stroke-width="1"/><path d="M1737.5,879 L1740.5,882.5 L1746.5,875.5" fill="none" stroke="#333" stroke-width="1.2"/><rect x="1645.5" y="891.5" width="15" height="15" fill="#fff" stroke="#333" stroke-width="1"/><path d="M1648.5,899 L1651.5,902.5 L1657.5,895.5" fill="none" stroke="#333" stroke-width="1.2"/><rect x="1734.5" y="891.5" width="15" height="15" fill="#fff" stroke="#333" stroke-width="1"/><path d="M1737.5,899 L1740.5,902.5 L1746.5,895.5" fill="none" stroke="#333" stroke-width="1.2"/><rect x="1645.5" y="911.5" width="15" height="15" fill="#fff" stroke="#333" stroke-width="1"/><path d="M1648.5,919 L1651.5,922.5 L1657.5,915.5" fill="none" stroke="#333" stroke-width="1.2"/><rect x="1734.5" y="911.5" width="15" height="15" fill="#fff" stroke="#333" stroke-width="1"/><path d="M1737.5,919 L1740.5,922.5 L1746.5,915.5" fill="none" stroke="#333" stroke-width="1.2"/><rect x="1645.5" y="931.5" width="15" height="15" fill="#fff" stroke="#333" stroke-width="1"/><path d="M1648.5,939 L1651.5,942.5 L1657.5,935.5" fill="none" stroke="#333" stroke-width="1.2"/><rect x="1734.5" y="931.5" width="15" height="15" fill="#fff" stroke="#333" stroke-width="1"/><path d="M1737.5,939 L1740.5,942.5 L1746.5,935.5" fill="none" stroke="#333" stroke-width="1.2"/><rect x="1645.5" y="951.5" width="15" height="15" fill="#fff" stroke="#333" stroke-width="1"/><path d="M1648.5,959 L1651.5,962.5 L1657.5,955.5" fill="none" stroke="#333" stroke-width="1.2"/><rect x="1734.5" y="951.5" width="15" height="15" fill="#fff" stroke="#333" stroke-width="1"/><path d="M1737.5,959 L1740.5,962.5 L1746.5,955.5" fill="none" stroke="#333" stroke-width="1.2"/></svg>
<div class="a" style="left:0px;top:973px;width:1920px;height:69px;background:#f0f0f0"></div>
<div class="a" style="left:0px;top:1014px;width:1920px;height:1px;background:#d8d8d8"></div>
<div class="a" style="left:361px;top:1017px;width:1px;height:25px;background:#d8d8d8"></div>
<div class="a" style="left:468px;top:1017px;width:1px;height:25px;background:#d8d8d8"></div>
<div class="a" style="left:695px;top:1017px;width:1px;height:25px;background:#d8d8d8"></div>
<div class="a" style="left:1054px;top:1017px;width:1px;height:25px;background:#d8d8d8"></div>
<div class="a" style="left:1315px;top:1017px;width:1px;height:25px;background:#d8d8d8"></div>
<div class="a" style="left:1445px;top:1017px;width:1px;height:25px;background:#d8d8d8"></div>
<div class="a" style="left:1682px;top:1017px;width:1px;height:25px;background:#d8d8d8"></div>
<div class="t" style="left:15px;top:977px;font-size:16px;color:#000;"><span style="font-size:16px;letter-spacing:-0.615px">U?</span></div>
<div class="t" style="left:217px;top:977px;font-size:16px;color:#000;"><span style="font-size:15px">库</span></div>
<div class="t" style="left:271px;top:977px;font-size:16px;color:#000;"><span style="font-size:15px">封装名称</span></div>
<div class="t" style="left:473px;top:977px;font-size:16px;color:#000;"><span style="font-size:15px">焊盘</span></div>
<div class="t" style="left:542px;top:977px;font-size:16px;color:#000;"><span style="font-size:15px">文档</span><span style="font-size:16px;letter-spacing:-0.287px">:</span></div>
<div class="t" style="left:634px;top:977px;font-size:16px;color:#000;"><span style="font-size:15px">焊盘</span></div>
<div class="t" style="left:703px;top:977px;font-size:16px;color:#000;"><span style="font-size:15px">过孔</span></div>
<div class="t" style="left:772px;top:977px;font-size:16px;color:#000;"><span style="font-size:15px">走线段</span></div>
<div class="t" style="left:856px;top:977px;font-size:16px;color:#000;"><span style="font-size:15px">网络</span></div>
<div class="t" style="left:925px;top:977px;font-size:16px;color:#000;"><span style="font-size:15px">未布线</span></div>
<div class="t" style="left:15px;top:997px;font-size:16px;color:#000;"><span style="font-size:16px;letter-spacing:-0.414px">RES-TH_WH160-1-104</span></div>
<div class="t" style="left:271px;top:997px;font-size:16px;color:#000;"><span style="font-size:16px;letter-spacing:-0.414px">RES-TH_WH160-1-104</span></div>
<div class="t" style="left:473px;top:997px;font-size:16px;color:#000;"><span style="font-size:16px;letter-spacing:-0.236px">5</span></div>
<div class="t" style="left:542px;top:997px;font-size:16px;color:#000;"><span style="font-size:15px">关键字</span><span style="font-size:16px;letter-spacing:-0.287px">:</span></div>
<div class="t" style="left:634px;top:997px;font-size:16px;color:#000;"><span style="font-size:16px;letter-spacing:-0.236px">5</span></div>
<div class="t" style="left:703px;top:997px;font-size:16px;color:#000;"><span style="font-size:16px;letter-spacing:-0.236px">0</span></div>
<div class="t" style="left:772px;top:997px;font-size:16px;color:#000;"><span style="font-size:16px;letter-spacing:-0.236px">0</span></div>
<div class="t" style="left:856px;top:997px;font-size:16px;color:#000;"><span style="font-size:16px;letter-spacing:-0.236px">0</span></div>
<div class="t" style="left:925px;top:997px;font-size:16px;color:#000;"><span style="font-size:16px;letter-spacing:-0.236px">0</span></div>
<div class="t" style="left:366px;top:1022px;font-size:16px;color:#000;"><span style="font-size:16px;letter-spacing:-0.223px">Z 6.65</span></div>
<div class="t" style="left:473px;top:1022px;font-size:16px;color:#000;"><span style="font-size:16px;letter-spacing:-0.214px">X 4.0000  Y -6.0000</span></div>
<div class="t" style="left:700px;top:1022px;font-size:16px;color:#000;"><span style="font-size:16px;letter-spacing:-0.048px">dx 4.0000  dy -6.0000  dist 7.2111</span></div>
<div class="t" style="left:1059px;top:1022px;font-size:16px;color:#000;"><span style="font-size:15px">栅格</span><span style="font-size:16px;letter-spacing:-0.199px">&nbsp;1.0000</span></div>
<div class="t" style="left:1320px;top:1022px;font-size:16px;color:#000;"><span style="font-size:16px;letter-spacing:0.746px">mm</span></div>
<svg class="a" style="left:0;top:0" width="1920" height="1042"><path d="M775.0,92.0 L781.7,110.6 L783.0,105.1 L1295.1,627.1 L1296.1,626.1 L787.9,100.4 L793.4,99.2Z" fill="#fa3838"/></svg>
</body></html>
